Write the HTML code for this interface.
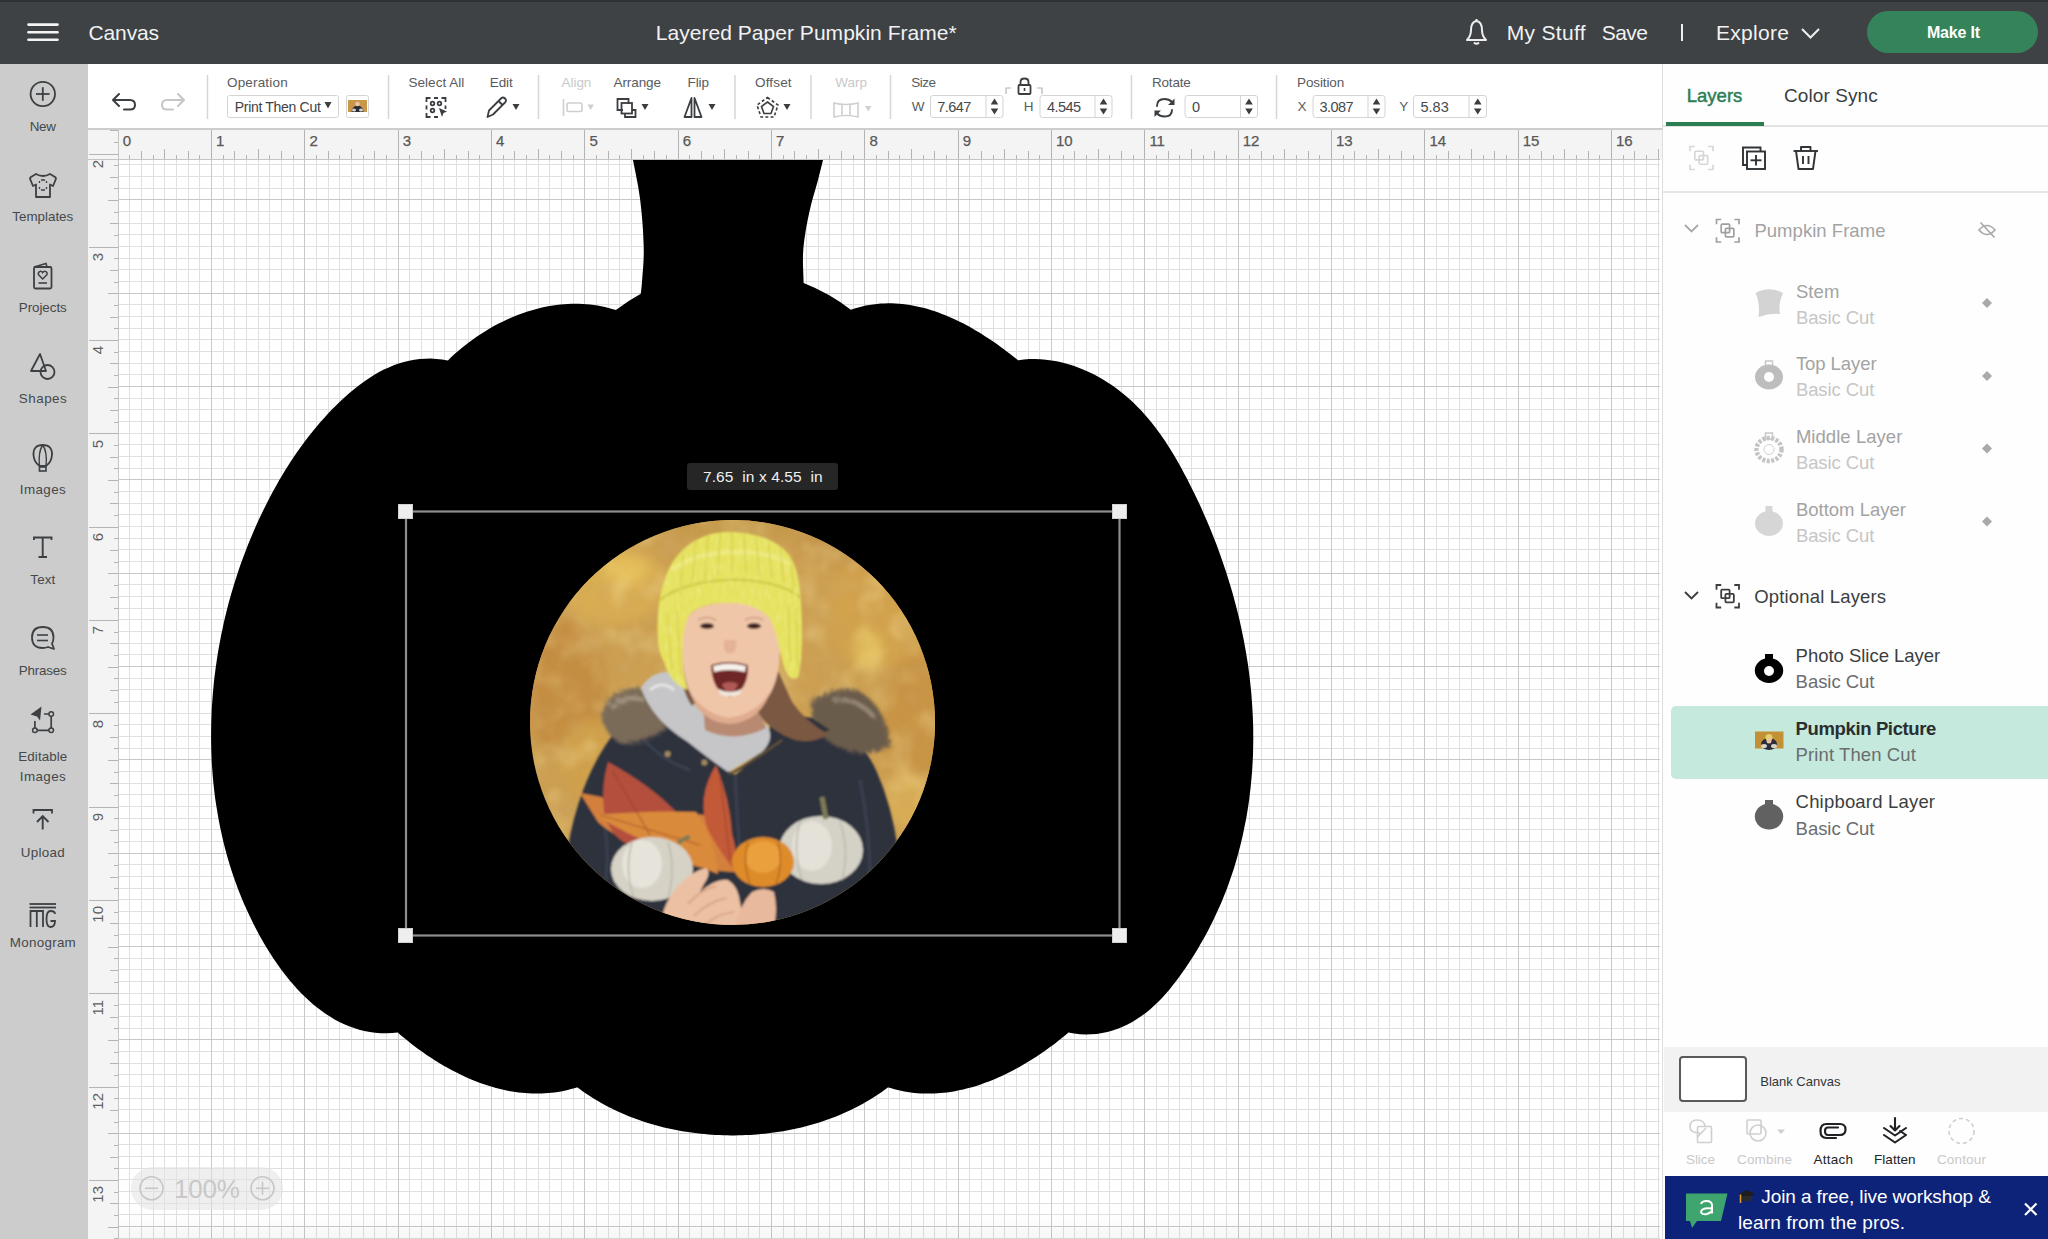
<!DOCTYPE html>
<html><head><meta charset="utf-8">
<style>
*{margin:0;padding:0;box-sizing:border-box}
html,body{width:2048px;height:1239px;overflow:hidden;background:#fff;font-family:"Liberation Sans",sans-serif}
.a{position:absolute}
.t{position:absolute;white-space:nowrap;font-family:"Liberation Sans",sans-serif}
svg{position:absolute;overflow:visible}
</style></head><body>

<svg class="a" style="left:0;top:0" width="2048" height="1239" viewBox="0 0 2048 1239" shape-rendering="crispEdges"><line x1="129.5" y1="160" x2="129.5" y2="1239" stroke="#dfdfdf" stroke-width="1"/><line x1="141.5" y1="160" x2="141.5" y2="1239" stroke="#dfdfdf" stroke-width="1"/><line x1="153.5" y1="160" x2="153.5" y2="1239" stroke="#dfdfdf" stroke-width="1"/><line x1="164.5" y1="160" x2="164.5" y2="1239" stroke="#dfdfdf" stroke-width="1"/><line x1="176.5" y1="160" x2="176.5" y2="1239" stroke="#dfdfdf" stroke-width="1"/><line x1="188.5" y1="160" x2="188.5" y2="1239" stroke="#dfdfdf" stroke-width="1"/><line x1="199.5" y1="160" x2="199.5" y2="1239" stroke="#dfdfdf" stroke-width="1"/><line x1="223.5" y1="160" x2="223.5" y2="1239" stroke="#dfdfdf" stroke-width="1"/><line x1="234.5" y1="160" x2="234.5" y2="1239" stroke="#dfdfdf" stroke-width="1"/><line x1="246.5" y1="160" x2="246.5" y2="1239" stroke="#dfdfdf" stroke-width="1"/><line x1="258.5" y1="160" x2="258.5" y2="1239" stroke="#dfdfdf" stroke-width="1"/><line x1="269.5" y1="160" x2="269.5" y2="1239" stroke="#dfdfdf" stroke-width="1"/><line x1="281.5" y1="160" x2="281.5" y2="1239" stroke="#dfdfdf" stroke-width="1"/><line x1="293.5" y1="160" x2="293.5" y2="1239" stroke="#dfdfdf" stroke-width="1"/><line x1="316.5" y1="160" x2="316.5" y2="1239" stroke="#dfdfdf" stroke-width="1"/><line x1="328.5" y1="160" x2="328.5" y2="1239" stroke="#dfdfdf" stroke-width="1"/><line x1="339.5" y1="160" x2="339.5" y2="1239" stroke="#dfdfdf" stroke-width="1"/><line x1="351.5" y1="160" x2="351.5" y2="1239" stroke="#dfdfdf" stroke-width="1"/><line x1="363.5" y1="160" x2="363.5" y2="1239" stroke="#dfdfdf" stroke-width="1"/><line x1="374.5" y1="160" x2="374.5" y2="1239" stroke="#dfdfdf" stroke-width="1"/><line x1="386.5" y1="160" x2="386.5" y2="1239" stroke="#dfdfdf" stroke-width="1"/><line x1="409.5" y1="160" x2="409.5" y2="1239" stroke="#dfdfdf" stroke-width="1"/><line x1="421.5" y1="160" x2="421.5" y2="1239" stroke="#dfdfdf" stroke-width="1"/><line x1="433.5" y1="160" x2="433.5" y2="1239" stroke="#dfdfdf" stroke-width="1"/><line x1="444.5" y1="160" x2="444.5" y2="1239" stroke="#dfdfdf" stroke-width="1"/><line x1="456.5" y1="160" x2="456.5" y2="1239" stroke="#dfdfdf" stroke-width="1"/><line x1="468.5" y1="160" x2="468.5" y2="1239" stroke="#dfdfdf" stroke-width="1"/><line x1="479.5" y1="160" x2="479.5" y2="1239" stroke="#dfdfdf" stroke-width="1"/><line x1="503.5" y1="160" x2="503.5" y2="1239" stroke="#dfdfdf" stroke-width="1"/><line x1="514.5" y1="160" x2="514.5" y2="1239" stroke="#dfdfdf" stroke-width="1"/><line x1="526.5" y1="160" x2="526.5" y2="1239" stroke="#dfdfdf" stroke-width="1"/><line x1="538.5" y1="160" x2="538.5" y2="1239" stroke="#dfdfdf" stroke-width="1"/><line x1="549.5" y1="160" x2="549.5" y2="1239" stroke="#dfdfdf" stroke-width="1"/><line x1="561.5" y1="160" x2="561.5" y2="1239" stroke="#dfdfdf" stroke-width="1"/><line x1="573.5" y1="160" x2="573.5" y2="1239" stroke="#dfdfdf" stroke-width="1"/><line x1="596.5" y1="160" x2="596.5" y2="1239" stroke="#dfdfdf" stroke-width="1"/><line x1="608.5" y1="160" x2="608.5" y2="1239" stroke="#dfdfdf" stroke-width="1"/><line x1="619.5" y1="160" x2="619.5" y2="1239" stroke="#dfdfdf" stroke-width="1"/><line x1="631.5" y1="160" x2="631.5" y2="1239" stroke="#dfdfdf" stroke-width="1"/><line x1="643.5" y1="160" x2="643.5" y2="1239" stroke="#dfdfdf" stroke-width="1"/><line x1="654.5" y1="160" x2="654.5" y2="1239" stroke="#dfdfdf" stroke-width="1"/><line x1="666.5" y1="160" x2="666.5" y2="1239" stroke="#dfdfdf" stroke-width="1"/><line x1="689.5" y1="160" x2="689.5" y2="1239" stroke="#dfdfdf" stroke-width="1"/><line x1="701.5" y1="160" x2="701.5" y2="1239" stroke="#dfdfdf" stroke-width="1"/><line x1="713.5" y1="160" x2="713.5" y2="1239" stroke="#dfdfdf" stroke-width="1"/><line x1="724.5" y1="160" x2="724.5" y2="1239" stroke="#dfdfdf" stroke-width="1"/><line x1="736.5" y1="160" x2="736.5" y2="1239" stroke="#dfdfdf" stroke-width="1"/><line x1="748.5" y1="160" x2="748.5" y2="1239" stroke="#dfdfdf" stroke-width="1"/><line x1="759.5" y1="160" x2="759.5" y2="1239" stroke="#dfdfdf" stroke-width="1"/><line x1="783.5" y1="160" x2="783.5" y2="1239" stroke="#dfdfdf" stroke-width="1"/><line x1="794.5" y1="160" x2="794.5" y2="1239" stroke="#dfdfdf" stroke-width="1"/><line x1="806.5" y1="160" x2="806.5" y2="1239" stroke="#dfdfdf" stroke-width="1"/><line x1="818.5" y1="160" x2="818.5" y2="1239" stroke="#dfdfdf" stroke-width="1"/><line x1="829.5" y1="160" x2="829.5" y2="1239" stroke="#dfdfdf" stroke-width="1"/><line x1="841.5" y1="160" x2="841.5" y2="1239" stroke="#dfdfdf" stroke-width="1"/><line x1="853.5" y1="160" x2="853.5" y2="1239" stroke="#dfdfdf" stroke-width="1"/><line x1="876.5" y1="160" x2="876.5" y2="1239" stroke="#dfdfdf" stroke-width="1"/><line x1="888.5" y1="160" x2="888.5" y2="1239" stroke="#dfdfdf" stroke-width="1"/><line x1="899.5" y1="160" x2="899.5" y2="1239" stroke="#dfdfdf" stroke-width="1"/><line x1="911.5" y1="160" x2="911.5" y2="1239" stroke="#dfdfdf" stroke-width="1"/><line x1="923.5" y1="160" x2="923.5" y2="1239" stroke="#dfdfdf" stroke-width="1"/><line x1="934.5" y1="160" x2="934.5" y2="1239" stroke="#dfdfdf" stroke-width="1"/><line x1="946.5" y1="160" x2="946.5" y2="1239" stroke="#dfdfdf" stroke-width="1"/><line x1="969.5" y1="160" x2="969.5" y2="1239" stroke="#dfdfdf" stroke-width="1"/><line x1="981.5" y1="160" x2="981.5" y2="1239" stroke="#dfdfdf" stroke-width="1"/><line x1="993.5" y1="160" x2="993.5" y2="1239" stroke="#dfdfdf" stroke-width="1"/><line x1="1004.5" y1="160" x2="1004.5" y2="1239" stroke="#dfdfdf" stroke-width="1"/><line x1="1016.5" y1="160" x2="1016.5" y2="1239" stroke="#dfdfdf" stroke-width="1"/><line x1="1028.5" y1="160" x2="1028.5" y2="1239" stroke="#dfdfdf" stroke-width="1"/><line x1="1039.5" y1="160" x2="1039.5" y2="1239" stroke="#dfdfdf" stroke-width="1"/><line x1="1063.5" y1="160" x2="1063.5" y2="1239" stroke="#dfdfdf" stroke-width="1"/><line x1="1074.5" y1="160" x2="1074.5" y2="1239" stroke="#dfdfdf" stroke-width="1"/><line x1="1086.5" y1="160" x2="1086.5" y2="1239" stroke="#dfdfdf" stroke-width="1"/><line x1="1098.5" y1="160" x2="1098.5" y2="1239" stroke="#dfdfdf" stroke-width="1"/><line x1="1109.5" y1="160" x2="1109.5" y2="1239" stroke="#dfdfdf" stroke-width="1"/><line x1="1121.5" y1="160" x2="1121.5" y2="1239" stroke="#dfdfdf" stroke-width="1"/><line x1="1133.5" y1="160" x2="1133.5" y2="1239" stroke="#dfdfdf" stroke-width="1"/><line x1="1156.5" y1="160" x2="1156.5" y2="1239" stroke="#dfdfdf" stroke-width="1"/><line x1="1168.5" y1="160" x2="1168.5" y2="1239" stroke="#dfdfdf" stroke-width="1"/><line x1="1179.5" y1="160" x2="1179.5" y2="1239" stroke="#dfdfdf" stroke-width="1"/><line x1="1191.5" y1="160" x2="1191.5" y2="1239" stroke="#dfdfdf" stroke-width="1"/><line x1="1203.5" y1="160" x2="1203.5" y2="1239" stroke="#dfdfdf" stroke-width="1"/><line x1="1214.5" y1="160" x2="1214.5" y2="1239" stroke="#dfdfdf" stroke-width="1"/><line x1="1226.5" y1="160" x2="1226.5" y2="1239" stroke="#dfdfdf" stroke-width="1"/><line x1="1249.5" y1="160" x2="1249.5" y2="1239" stroke="#dfdfdf" stroke-width="1"/><line x1="1261.5" y1="160" x2="1261.5" y2="1239" stroke="#dfdfdf" stroke-width="1"/><line x1="1273.5" y1="160" x2="1273.5" y2="1239" stroke="#dfdfdf" stroke-width="1"/><line x1="1284.5" y1="160" x2="1284.5" y2="1239" stroke="#dfdfdf" stroke-width="1"/><line x1="1296.5" y1="160" x2="1296.5" y2="1239" stroke="#dfdfdf" stroke-width="1"/><line x1="1308.5" y1="160" x2="1308.5" y2="1239" stroke="#dfdfdf" stroke-width="1"/><line x1="1319.5" y1="160" x2="1319.5" y2="1239" stroke="#dfdfdf" stroke-width="1"/><line x1="1343.5" y1="160" x2="1343.5" y2="1239" stroke="#dfdfdf" stroke-width="1"/><line x1="1354.5" y1="160" x2="1354.5" y2="1239" stroke="#dfdfdf" stroke-width="1"/><line x1="1366.5" y1="160" x2="1366.5" y2="1239" stroke="#dfdfdf" stroke-width="1"/><line x1="1378.5" y1="160" x2="1378.5" y2="1239" stroke="#dfdfdf" stroke-width="1"/><line x1="1389.5" y1="160" x2="1389.5" y2="1239" stroke="#dfdfdf" stroke-width="1"/><line x1="1401.5" y1="160" x2="1401.5" y2="1239" stroke="#dfdfdf" stroke-width="1"/><line x1="1413.5" y1="160" x2="1413.5" y2="1239" stroke="#dfdfdf" stroke-width="1"/><line x1="1436.5" y1="160" x2="1436.5" y2="1239" stroke="#dfdfdf" stroke-width="1"/><line x1="1448.5" y1="160" x2="1448.5" y2="1239" stroke="#dfdfdf" stroke-width="1"/><line x1="1459.5" y1="160" x2="1459.5" y2="1239" stroke="#dfdfdf" stroke-width="1"/><line x1="1471.5" y1="160" x2="1471.5" y2="1239" stroke="#dfdfdf" stroke-width="1"/><line x1="1483.5" y1="160" x2="1483.5" y2="1239" stroke="#dfdfdf" stroke-width="1"/><line x1="1494.5" y1="160" x2="1494.5" y2="1239" stroke="#dfdfdf" stroke-width="1"/><line x1="1506.5" y1="160" x2="1506.5" y2="1239" stroke="#dfdfdf" stroke-width="1"/><line x1="1529.5" y1="160" x2="1529.5" y2="1239" stroke="#dfdfdf" stroke-width="1"/><line x1="1541.5" y1="160" x2="1541.5" y2="1239" stroke="#dfdfdf" stroke-width="1"/><line x1="1553.5" y1="160" x2="1553.5" y2="1239" stroke="#dfdfdf" stroke-width="1"/><line x1="1564.5" y1="160" x2="1564.5" y2="1239" stroke="#dfdfdf" stroke-width="1"/><line x1="1576.5" y1="160" x2="1576.5" y2="1239" stroke="#dfdfdf" stroke-width="1"/><line x1="1588.5" y1="160" x2="1588.5" y2="1239" stroke="#dfdfdf" stroke-width="1"/><line x1="1599.5" y1="160" x2="1599.5" y2="1239" stroke="#dfdfdf" stroke-width="1"/><line x1="1623.5" y1="160" x2="1623.5" y2="1239" stroke="#dfdfdf" stroke-width="1"/><line x1="1634.5" y1="160" x2="1634.5" y2="1239" stroke="#dfdfdf" stroke-width="1"/><line x1="1646.5" y1="160" x2="1646.5" y2="1239" stroke="#dfdfdf" stroke-width="1"/><line x1="1658.5" y1="160" x2="1658.5" y2="1239" stroke="#dfdfdf" stroke-width="1"/><line x1="118" y1="164.5" x2="1660" y2="164.5" stroke="#dfdfdf" stroke-width="1"/><line x1="118" y1="176.5" x2="1660" y2="176.5" stroke="#dfdfdf" stroke-width="1"/><line x1="118" y1="188.5" x2="1660" y2="188.5" stroke="#dfdfdf" stroke-width="1"/><line x1="118" y1="211.5" x2="1660" y2="211.5" stroke="#dfdfdf" stroke-width="1"/><line x1="118" y1="223.5" x2="1660" y2="223.5" stroke="#dfdfdf" stroke-width="1"/><line x1="118" y1="234.5" x2="1660" y2="234.5" stroke="#dfdfdf" stroke-width="1"/><line x1="118" y1="246.5" x2="1660" y2="246.5" stroke="#dfdfdf" stroke-width="1"/><line x1="118" y1="258.5" x2="1660" y2="258.5" stroke="#dfdfdf" stroke-width="1"/><line x1="118" y1="269.5" x2="1660" y2="269.5" stroke="#dfdfdf" stroke-width="1"/><line x1="118" y1="281.5" x2="1660" y2="281.5" stroke="#dfdfdf" stroke-width="1"/><line x1="118" y1="304.5" x2="1660" y2="304.5" stroke="#dfdfdf" stroke-width="1"/><line x1="118" y1="316.5" x2="1660" y2="316.5" stroke="#dfdfdf" stroke-width="1"/><line x1="118" y1="328.5" x2="1660" y2="328.5" stroke="#dfdfdf" stroke-width="1"/><line x1="118" y1="339.5" x2="1660" y2="339.5" stroke="#dfdfdf" stroke-width="1"/><line x1="118" y1="351.5" x2="1660" y2="351.5" stroke="#dfdfdf" stroke-width="1"/><line x1="118" y1="363.5" x2="1660" y2="363.5" stroke="#dfdfdf" stroke-width="1"/><line x1="118" y1="374.5" x2="1660" y2="374.5" stroke="#dfdfdf" stroke-width="1"/><line x1="118" y1="398.5" x2="1660" y2="398.5" stroke="#dfdfdf" stroke-width="1"/><line x1="118" y1="409.5" x2="1660" y2="409.5" stroke="#dfdfdf" stroke-width="1"/><line x1="118" y1="421.5" x2="1660" y2="421.5" stroke="#dfdfdf" stroke-width="1"/><line x1="118" y1="433.5" x2="1660" y2="433.5" stroke="#dfdfdf" stroke-width="1"/><line x1="118" y1="444.5" x2="1660" y2="444.5" stroke="#dfdfdf" stroke-width="1"/><line x1="118" y1="456.5" x2="1660" y2="456.5" stroke="#dfdfdf" stroke-width="1"/><line x1="118" y1="468.5" x2="1660" y2="468.5" stroke="#dfdfdf" stroke-width="1"/><line x1="118" y1="491.5" x2="1660" y2="491.5" stroke="#dfdfdf" stroke-width="1"/><line x1="118" y1="503.5" x2="1660" y2="503.5" stroke="#dfdfdf" stroke-width="1"/><line x1="118" y1="514.5" x2="1660" y2="514.5" stroke="#dfdfdf" stroke-width="1"/><line x1="118" y1="526.5" x2="1660" y2="526.5" stroke="#dfdfdf" stroke-width="1"/><line x1="118" y1="538.5" x2="1660" y2="538.5" stroke="#dfdfdf" stroke-width="1"/><line x1="118" y1="549.5" x2="1660" y2="549.5" stroke="#dfdfdf" stroke-width="1"/><line x1="118" y1="561.5" x2="1660" y2="561.5" stroke="#dfdfdf" stroke-width="1"/><line x1="118" y1="584.5" x2="1660" y2="584.5" stroke="#dfdfdf" stroke-width="1"/><line x1="118" y1="596.5" x2="1660" y2="596.5" stroke="#dfdfdf" stroke-width="1"/><line x1="118" y1="608.5" x2="1660" y2="608.5" stroke="#dfdfdf" stroke-width="1"/><line x1="118" y1="619.5" x2="1660" y2="619.5" stroke="#dfdfdf" stroke-width="1"/><line x1="118" y1="631.5" x2="1660" y2="631.5" stroke="#dfdfdf" stroke-width="1"/><line x1="118" y1="643.5" x2="1660" y2="643.5" stroke="#dfdfdf" stroke-width="1"/><line x1="118" y1="654.5" x2="1660" y2="654.5" stroke="#dfdfdf" stroke-width="1"/><line x1="118" y1="678.5" x2="1660" y2="678.5" stroke="#dfdfdf" stroke-width="1"/><line x1="118" y1="689.5" x2="1660" y2="689.5" stroke="#dfdfdf" stroke-width="1"/><line x1="118" y1="701.5" x2="1660" y2="701.5" stroke="#dfdfdf" stroke-width="1"/><line x1="118" y1="713.5" x2="1660" y2="713.5" stroke="#dfdfdf" stroke-width="1"/><line x1="118" y1="724.5" x2="1660" y2="724.5" stroke="#dfdfdf" stroke-width="1"/><line x1="118" y1="736.5" x2="1660" y2="736.5" stroke="#dfdfdf" stroke-width="1"/><line x1="118" y1="748.5" x2="1660" y2="748.5" stroke="#dfdfdf" stroke-width="1"/><line x1="118" y1="771.5" x2="1660" y2="771.5" stroke="#dfdfdf" stroke-width="1"/><line x1="118" y1="783.5" x2="1660" y2="783.5" stroke="#dfdfdf" stroke-width="1"/><line x1="118" y1="794.5" x2="1660" y2="794.5" stroke="#dfdfdf" stroke-width="1"/><line x1="118" y1="806.5" x2="1660" y2="806.5" stroke="#dfdfdf" stroke-width="1"/><line x1="118" y1="818.5" x2="1660" y2="818.5" stroke="#dfdfdf" stroke-width="1"/><line x1="118" y1="829.5" x2="1660" y2="829.5" stroke="#dfdfdf" stroke-width="1"/><line x1="118" y1="841.5" x2="1660" y2="841.5" stroke="#dfdfdf" stroke-width="1"/><line x1="118" y1="864.5" x2="1660" y2="864.5" stroke="#dfdfdf" stroke-width="1"/><line x1="118" y1="876.5" x2="1660" y2="876.5" stroke="#dfdfdf" stroke-width="1"/><line x1="118" y1="888.5" x2="1660" y2="888.5" stroke="#dfdfdf" stroke-width="1"/><line x1="118" y1="899.5" x2="1660" y2="899.5" stroke="#dfdfdf" stroke-width="1"/><line x1="118" y1="911.5" x2="1660" y2="911.5" stroke="#dfdfdf" stroke-width="1"/><line x1="118" y1="923.5" x2="1660" y2="923.5" stroke="#dfdfdf" stroke-width="1"/><line x1="118" y1="934.5" x2="1660" y2="934.5" stroke="#dfdfdf" stroke-width="1"/><line x1="118" y1="958.5" x2="1660" y2="958.5" stroke="#dfdfdf" stroke-width="1"/><line x1="118" y1="969.5" x2="1660" y2="969.5" stroke="#dfdfdf" stroke-width="1"/><line x1="118" y1="981.5" x2="1660" y2="981.5" stroke="#dfdfdf" stroke-width="1"/><line x1="118" y1="993.5" x2="1660" y2="993.5" stroke="#dfdfdf" stroke-width="1"/><line x1="118" y1="1004.5" x2="1660" y2="1004.5" stroke="#dfdfdf" stroke-width="1"/><line x1="118" y1="1016.5" x2="1660" y2="1016.5" stroke="#dfdfdf" stroke-width="1"/><line x1="118" y1="1028.5" x2="1660" y2="1028.5" stroke="#dfdfdf" stroke-width="1"/><line x1="118" y1="1051.5" x2="1660" y2="1051.5" stroke="#dfdfdf" stroke-width="1"/><line x1="118" y1="1063.5" x2="1660" y2="1063.5" stroke="#dfdfdf" stroke-width="1"/><line x1="118" y1="1074.5" x2="1660" y2="1074.5" stroke="#dfdfdf" stroke-width="1"/><line x1="118" y1="1086.5" x2="1660" y2="1086.5" stroke="#dfdfdf" stroke-width="1"/><line x1="118" y1="1098.5" x2="1660" y2="1098.5" stroke="#dfdfdf" stroke-width="1"/><line x1="118" y1="1109.5" x2="1660" y2="1109.5" stroke="#dfdfdf" stroke-width="1"/><line x1="118" y1="1121.5" x2="1660" y2="1121.5" stroke="#dfdfdf" stroke-width="1"/><line x1="118" y1="1144.5" x2="1660" y2="1144.5" stroke="#dfdfdf" stroke-width="1"/><line x1="118" y1="1156.5" x2="1660" y2="1156.5" stroke="#dfdfdf" stroke-width="1"/><line x1="118" y1="1168.5" x2="1660" y2="1168.5" stroke="#dfdfdf" stroke-width="1"/><line x1="118" y1="1179.5" x2="1660" y2="1179.5" stroke="#dfdfdf" stroke-width="1"/><line x1="118" y1="1191.5" x2="1660" y2="1191.5" stroke="#dfdfdf" stroke-width="1"/><line x1="118" y1="1203.5" x2="1660" y2="1203.5" stroke="#dfdfdf" stroke-width="1"/><line x1="118" y1="1214.5" x2="1660" y2="1214.5" stroke="#dfdfdf" stroke-width="1"/><line x1="118" y1="1238.5" x2="1660" y2="1238.5" stroke="#dfdfdf" stroke-width="1"/><line x1="118.5" y1="160" x2="118.5" y2="1239" stroke="#c8c8c8" stroke-width="1"/><line x1="211.5" y1="160" x2="211.5" y2="1239" stroke="#c8c8c8" stroke-width="1"/><line x1="304.5" y1="160" x2="304.5" y2="1239" stroke="#c8c8c8" stroke-width="1"/><line x1="398.5" y1="160" x2="398.5" y2="1239" stroke="#c8c8c8" stroke-width="1"/><line x1="491.5" y1="160" x2="491.5" y2="1239" stroke="#c8c8c8" stroke-width="1"/><line x1="584.5" y1="160" x2="584.5" y2="1239" stroke="#c8c8c8" stroke-width="1"/><line x1="678.5" y1="160" x2="678.5" y2="1239" stroke="#c8c8c8" stroke-width="1"/><line x1="771.5" y1="160" x2="771.5" y2="1239" stroke="#c8c8c8" stroke-width="1"/><line x1="864.5" y1="160" x2="864.5" y2="1239" stroke="#c8c8c8" stroke-width="1"/><line x1="958.5" y1="160" x2="958.5" y2="1239" stroke="#c8c8c8" stroke-width="1"/><line x1="1051.5" y1="160" x2="1051.5" y2="1239" stroke="#c8c8c8" stroke-width="1"/><line x1="1144.5" y1="160" x2="1144.5" y2="1239" stroke="#c8c8c8" stroke-width="1"/><line x1="1238.5" y1="160" x2="1238.5" y2="1239" stroke="#c8c8c8" stroke-width="1"/><line x1="1331.5" y1="160" x2="1331.5" y2="1239" stroke="#c8c8c8" stroke-width="1"/><line x1="1424.5" y1="160" x2="1424.5" y2="1239" stroke="#c8c8c8" stroke-width="1"/><line x1="1518.5" y1="160" x2="1518.5" y2="1239" stroke="#c8c8c8" stroke-width="1"/><line x1="1611.5" y1="160" x2="1611.5" y2="1239" stroke="#c8c8c8" stroke-width="1"/><line x1="118" y1="199.5" x2="1660" y2="199.5" stroke="#c8c8c8" stroke-width="1"/><line x1="118" y1="293.5" x2="1660" y2="293.5" stroke="#c8c8c8" stroke-width="1"/><line x1="118" y1="386.5" x2="1660" y2="386.5" stroke="#c8c8c8" stroke-width="1"/><line x1="118" y1="479.5" x2="1660" y2="479.5" stroke="#c8c8c8" stroke-width="1"/><line x1="118" y1="573.5" x2="1660" y2="573.5" stroke="#c8c8c8" stroke-width="1"/><line x1="118" y1="666.5" x2="1660" y2="666.5" stroke="#c8c8c8" stroke-width="1"/><line x1="118" y1="759.5" x2="1660" y2="759.5" stroke="#c8c8c8" stroke-width="1"/><line x1="118" y1="853.5" x2="1660" y2="853.5" stroke="#c8c8c8" stroke-width="1"/><line x1="118" y1="946.5" x2="1660" y2="946.5" stroke="#c8c8c8" stroke-width="1"/><line x1="118" y1="1039.5" x2="1660" y2="1039.5" stroke="#c8c8c8" stroke-width="1"/><line x1="118" y1="1133.5" x2="1660" y2="1133.5" stroke="#c8c8c8" stroke-width="1"/><line x1="118" y1="1226.5" x2="1660" y2="1226.5" stroke="#c8c8c8" stroke-width="1"/></svg>
<svg class="a" style="left:0;top:0" width="2048" height="1239" viewBox="0 0 2048 1239"><path d="M631 150 L825.5 150 C823.0 160.0 820.4 170.8 818.0 180.0 C815.6 189.2 813.1 196.3 811.0 205.0 C808.9 213.7 806.8 223.7 805.5 232.0 C804.2 240.3 803.3 246.5 803.0 255.0 C802.7 263.5 803.4 273.7 803.6 283.0 A192.2 192.2 0 0 1 850.8 309.7 L850.8 309.7 L854.5 308.5 L858.3 307.4 L862.0 306.5 L865.7 305.6 L869.4 304.9 L873.1 304.4 L876.9 303.9 L880.6 303.6 L884.3 303.4 L888.0 303.3 L891.6 303.3 L895.3 303.5 L899.0 303.7 L902.6 304.0 L906.3 304.5 L909.9 305.0 L913.5 305.7 L917.1 306.4 L920.7 307.2 L924.3 308.1 L927.8 309.1 L931.4 310.2 L934.9 311.3 L938.4 312.5 L941.9 313.9 L945.4 315.2 L948.8 316.7 L952.3 318.2 L955.7 319.8 L959.1 321.4 L962.5 323.1 L965.8 324.8 L969.1 326.6 L972.4 328.5 L975.7 330.4 L978.9 332.3 L982.1 334.3 L985.3 336.4 L988.5 338.4 L991.6 340.5 L994.7 342.6 L997.8 344.8 L1000.8 347.0 L1003.9 349.2 L1006.8 351.4 L1009.8 353.7 L1012.7 355.9 L1015.6 358.2 L1018.4 360.5 L1018.4 360.2 L1023.9 359.5 L1029.4 359.1 L1034.9 359.0 L1040.4 359.2 L1045.9 359.7 L1051.3 360.4 L1056.8 361.3 L1062.1 362.5 L1067.5 363.9 L1072.8 365.5 L1078.0 367.4 L1083.1 369.4 L1088.2 371.7 L1093.2 374.1 L1098.2 376.8 L1103.0 379.5 L1107.7 382.5 L1112.4 385.6 L1116.9 388.8 L1121.3 392.2 L1125.6 395.7 L1129.7 399.3 L1133.8 403.1 L1137.6 406.9 L1141.4 410.8 L1145.1 414.9 L1148.6 419.0 L1152.1 423.2 L1155.4 427.5 L1158.7 431.9 L1161.8 436.3 L1164.9 440.8 L1167.9 445.4 L1170.8 450.0 L1173.7 454.7 L1176.5 459.5 L1179.2 464.2 L1181.8 469.1 L1184.4 473.9 L1187.0 478.8 L1189.5 483.7 L1192.0 488.7 L1194.4 493.6 L1196.8 498.6 L1199.2 503.6 L1201.5 508.6 L1203.7 513.7 L1206.0 518.7 L1208.1 523.8 L1210.3 528.9 L1212.3 534.0 L1214.4 539.2 L1216.4 544.3 L1218.3 549.5 L1220.2 554.7 L1222.0 559.9 L1223.8 565.2 L1225.6 570.4 L1227.3 575.7 L1228.9 580.9 L1230.5 586.2 L1232.1 591.5 L1233.6 596.9 L1235.0 602.2 L1236.4 607.5 L1237.8 612.9 L1239.1 618.3 L1240.3 623.6 L1241.5 629.0 L1242.6 634.4 L1243.7 639.8 L1244.7 645.3 L1245.7 650.7 L1246.6 656.1 L1247.5 661.6 L1248.3 667.0 L1249.0 672.5 L1249.7 678.0 L1250.3 683.4 L1250.9 688.9 L1251.4 694.4 L1251.8 699.9 L1252.2 705.4 L1252.5 710.9 L1252.8 716.4 L1253.0 721.9 L1253.2 727.4 L1253.2 732.9 L1253.3 738.4 L1253.2 743.9 L1253.1 749.4 L1253.0 754.9 L1252.7 760.4 L1252.4 765.9 L1252.1 771.4 L1251.6 776.9 L1251.1 782.3 L1250.6 787.8 L1249.9 793.3 L1249.3 798.7 L1248.5 804.2 L1247.7 809.6 L1246.8 815.0 L1245.8 820.4 L1244.7 825.8 L1243.6 831.2 L1242.5 836.6 L1241.2 841.9 L1239.9 847.3 L1238.5 852.6 L1237.0 857.9 L1235.5 863.1 L1233.9 868.4 L1232.2 873.6 L1230.4 878.8 L1228.6 884.0 L1226.7 889.2 L1224.7 894.3 L1222.6 899.4 L1220.5 904.5 L1218.2 909.6 L1215.9 914.6 L1213.6 919.6 L1211.1 924.6 L1208.6 929.5 L1206.0 934.4 L1203.3 939.3 L1200.5 944.1 L1197.7 948.9 L1194.8 953.7 L1191.8 958.4 L1188.8 963.1 L1185.7 967.7 L1182.5 972.3 L1179.3 976.8 L1176.0 981.3 L1172.6 985.6 L1169.1 989.9 L1165.5 994.1 L1161.8 998.2 L1158.0 1002.1 L1154.0 1005.8 L1150.0 1009.4 L1145.7 1012.9 L1141.4 1016.1 L1136.9 1019.1 L1132.3 1021.9 L1127.5 1024.5 L1122.7 1026.7 L1117.7 1028.8 L1112.6 1030.5 L1107.4 1032.0 L1102.1 1033.1 L1096.7 1033.9 L1091.2 1034.3 L1085.6 1034.4 L1080.0 1034.2 L1074.2 1033.5 L1068.4 1032.4 L1068.4 1032.6 L1065.9 1034.7 L1063.4 1036.7 L1060.9 1038.8 L1058.3 1040.8 L1055.7 1042.9 L1053.1 1044.9 L1050.4 1046.8 L1047.7 1048.8 L1045.0 1050.7 L1042.2 1052.7 L1039.5 1054.5 L1036.7 1056.4 L1033.8 1058.2 L1031.0 1060.1 L1028.1 1061.8 L1025.2 1063.6 L1022.3 1065.3 L1019.4 1067.0 L1016.4 1068.6 L1013.4 1070.2 L1010.4 1071.8 L1007.4 1073.3 L1004.3 1074.8 L1001.3 1076.2 L998.2 1077.6 L995.1 1078.9 L992.0 1080.2 L988.9 1081.5 L985.7 1082.6 L982.6 1083.8 L979.4 1084.9 L976.2 1085.9 L973.0 1086.9 L969.8 1087.8 L966.6 1088.6 L963.4 1089.4 L960.1 1090.1 L956.9 1090.8 L953.6 1091.4 L950.4 1091.9 L947.1 1092.4 L943.8 1092.8 L940.6 1093.1 L937.3 1093.3 L934.0 1093.5 L930.7 1093.6 L927.4 1093.6 L924.1 1093.5 L920.8 1093.4 L917.5 1093.2 L914.2 1092.9 L910.9 1092.5 L907.6 1092.0 L904.3 1091.4 L901.0 1090.8 L897.7 1090.0 L894.5 1089.2 L891.2 1088.2 L887.9 1087.2 L888.1 1087.3 L885.1 1089.5 L882.1 1091.7 L879.1 1093.8 L876.0 1095.8 L872.9 1097.8 L869.7 1099.7 L866.6 1101.6 L863.3 1103.5 L860.1 1105.2 L856.8 1106.9 L853.6 1108.6 L850.2 1110.2 L846.9 1111.8 L843.5 1113.3 L840.1 1114.8 L836.7 1116.2 L833.3 1117.5 L829.8 1118.8 L826.3 1120.1 L822.8 1121.3 L819.3 1122.4 L815.7 1123.5 L812.2 1124.6 L808.6 1125.6 L805.0 1126.5 L801.4 1127.4 L797.8 1128.3 L794.1 1129.1 L790.5 1129.8 L786.8 1130.5 L783.1 1131.2 L779.4 1131.8 L775.7 1132.3 L772.0 1132.8 L768.3 1133.3 L764.6 1133.7 L760.8 1134.1 L757.1 1134.4 L753.4 1134.7 L749.6 1134.9 L745.8 1135.1 L742.1 1135.2 L738.3 1135.3 L734.6 1135.4 L730.8 1135.4 L727.1 1135.3 L723.3 1135.2 L719.6 1135.1 L715.8 1134.9 L712.0 1134.7 L708.3 1134.4 L704.6 1134.1 L700.8 1133.7 L697.1 1133.3 L693.4 1132.8 L689.7 1132.3 L686.0 1131.8 L682.3 1131.2 L678.6 1130.5 L674.9 1129.8 L671.3 1129.1 L667.6 1128.3 L664.0 1127.4 L660.4 1126.5 L656.8 1125.6 L653.2 1124.6 L649.7 1123.5 L646.1 1122.4 L642.6 1121.3 L639.1 1120.1 L635.6 1118.8 L632.1 1117.5 L628.7 1116.2 L625.3 1114.8 L621.9 1113.3 L618.5 1111.8 L615.2 1110.2 L611.8 1108.6 L608.6 1106.9 L605.3 1105.2 L602.1 1103.5 L598.8 1101.6 L595.7 1099.7 L592.5 1097.8 L589.4 1095.8 L586.3 1093.8 L583.3 1091.7 L580.3 1089.5 L577.3 1087.3 L577.5 1087.2 L574.3 1088.2 L571.0 1089.1 L567.7 1090.0 L564.5 1090.7 L561.2 1091.4 L557.9 1091.9 L554.6 1092.4 L551.4 1092.8 L548.1 1093.1 L544.8 1093.3 L541.5 1093.5 L538.2 1093.6 L535.0 1093.6 L531.7 1093.5 L528.4 1093.3 L525.1 1093.1 L521.9 1092.8 L518.6 1092.4 L515.3 1092.0 L512.1 1091.4 L508.8 1090.9 L505.6 1090.2 L502.4 1089.5 L499.2 1088.7 L496.0 1087.9 L492.8 1087.0 L489.6 1086.1 L486.4 1085.0 L483.2 1084.0 L480.1 1082.9 L477.0 1081.7 L473.8 1080.5 L470.7 1079.2 L467.7 1077.9 L464.6 1076.5 L461.5 1075.1 L458.5 1073.6 L455.5 1072.1 L452.5 1070.6 L449.6 1069.0 L446.6 1067.3 L443.7 1065.7 L440.8 1064.0 L437.9 1062.2 L435.0 1060.4 L432.2 1058.6 L429.4 1056.8 L426.6 1054.9 L423.9 1053.0 L421.2 1051.1 L418.5 1049.2 L415.8 1047.2 L413.2 1045.2 L410.6 1043.2 L408.0 1041.1 L405.5 1039.1 L403.0 1037.0 L400.5 1034.9 L398.1 1032.8 L397.9 1032.4 L392.1 1033.0 L386.3 1033.3 L380.7 1033.2 L375.2 1032.8 L369.8 1032.0 L364.4 1031.0 L359.2 1029.7 L354.1 1028.1 L349.1 1026.3 L344.2 1024.2 L339.3 1021.9 L334.6 1019.4 L330.0 1016.6 L325.5 1013.7 L321.1 1010.6 L316.8 1007.3 L312.7 1003.9 L308.6 1000.3 L304.6 996.6 L300.7 992.7 L296.9 988.7 L293.3 984.6 L289.7 980.4 L286.2 976.1 L282.8 971.7 L279.5 967.2 L276.2 962.6 L273.1 957.9 L270.1 953.2 L267.1 948.5 L264.2 943.7 L261.4 938.8 L258.7 933.9 L256.1 929.0 L253.5 924.1 L251.1 919.1 L248.7 914.1 L246.4 909.1 L244.1 904.0 L242.0 898.9 L239.9 893.8 L237.9 888.7 L236.0 883.5 L234.2 878.4 L232.4 873.2 L230.7 867.9 L229.1 862.7 L227.5 857.4 L226.1 852.2 L224.7 846.9 L223.3 841.5 L222.1 836.2 L220.9 830.8 L219.8 825.5 L218.7 820.1 L217.8 814.7 L216.9 809.3 L216.0 803.9 L215.2 798.4 L214.5 793.0 L213.9 787.6 L213.3 782.1 L212.8 776.6 L212.4 771.2 L212.0 765.7 L211.7 760.2 L211.5 754.7 L211.3 749.2 L211.2 743.7 L211.1 738.2 L211.1 732.7 L211.2 727.2 L211.3 721.7 L211.5 716.2 L211.7 710.7 L212.0 705.2 L212.4 699.7 L212.8 694.2 L213.3 688.8 L213.8 683.3 L214.4 677.8 L215.1 672.3 L215.8 666.9 L216.6 661.4 L217.4 656.0 L218.3 650.5 L219.3 645.1 L220.3 639.7 L221.3 634.3 L222.5 628.9 L223.6 623.5 L224.9 618.1 L226.2 612.8 L227.5 607.4 L228.9 602.1 L230.4 596.8 L231.9 591.5 L233.5 586.2 L235.1 580.9 L236.8 575.7 L238.5 570.5 L240.3 565.3 L242.2 560.1 L244.1 554.9 L246.1 549.7 L248.1 544.6 L250.2 539.5 L252.3 534.4 L254.5 529.3 L256.7 524.3 L259.0 519.3 L261.4 514.3 L263.8 509.3 L266.2 504.4 L268.7 499.5 L271.3 494.6 L273.9 489.7 L276.6 484.9 L279.3 480.1 L282.1 475.4 L285.0 470.6 L287.9 466.0 L290.9 461.3 L293.9 456.7 L297.0 452.2 L300.2 447.7 L303.5 443.2 L306.8 438.8 L310.2 434.5 L313.6 430.2 L317.1 426.0 L320.7 421.8 L324.4 417.7 L328.1 413.6 L331.9 409.6 L335.8 405.7 L339.8 401.8 L343.9 398.0 L348.0 394.3 L352.2 390.7 L356.5 387.2 L360.8 383.9 L365.3 380.7 L369.8 377.7 L374.4 374.8 L379.1 372.1 L383.9 369.6 L388.8 367.4 L393.7 365.3 L398.7 363.5 L403.9 362.0 L409.1 360.7 L414.3 359.7 L419.7 359.0 L425.2 358.7 L430.7 358.6 L436.4 358.9 L442.1 359.5 L447.9 360.5 L448.2 360.2 L450.8 357.6 L453.5 355.1 L456.3 352.6 L459.1 350.2 L462.0 347.8 L464.9 345.5 L467.8 343.2 L470.8 340.9 L473.9 338.7 L477.0 336.6 L480.1 334.5 L483.3 332.4 L486.5 330.4 L489.7 328.5 L493.0 326.6 L496.3 324.8 L499.7 323.1 L503.1 321.4 L506.5 319.8 L509.9 318.2 L513.4 316.7 L516.9 315.3 L520.4 314.0 L524.0 312.7 L527.5 311.6 L531.1 310.5 L534.7 309.4 L538.3 308.5 L542.0 307.6 L545.6 306.8 L549.3 306.1 L553.0 305.5 L556.7 305.0 L560.4 304.6 L564.1 304.2 L567.8 304.0 L571.5 303.8 L575.2 303.8 L578.9 303.8 L582.7 304.0 L586.4 304.2 L590.1 304.5 L593.8 305.0 L597.5 305.6 L601.2 306.2 L604.9 307.0 L608.6 307.9 L612.2 308.9 L615.9 310.0 A192.2 192.2 0 0 1 640.8 293.7 C641.3 288.8 641.7 286.8 642.2 279.0 C642.7 271.2 644.2 260.4 643.8 247.0 C643.4 233.6 642.1 214.6 640.0 198.4 C637.9 182.2 634.0 166.1 631.0 150.0 Z" fill="#000"/></svg>
<svg class="a" style="left:0;top:0" width="2048" height="1239" viewBox="0 0 2048 1239"><defs><clipPath id="pc"><circle cx="732.5" cy="722.5" r="202.5"/></clipPath><filter id="bl" x="-20%" y="-20%" width="140%" height="140%"><feGaussianBlur stdDeviation="6"/></filter><filter id="bl2"><feGaussianBlur stdDeviation="1.2"/></filter><filter id="tex" x="0" y="0" width="100%" height="100%"><feTurbulence type="fractalNoise" baseFrequency="0.035" numOctaves="3" seed="7"/><feColorMatrix type="matrix" values="0 0 0 0 0.93  0 0 0 0 0.78  0 0 0 0 0.35  0 0 0 1.6 -0.75"/><feGaussianBlur stdDeviation="2"/></filter><filter id="tex2" x="0" y="0" width="100%" height="100%"><feTurbulence type="fractalNoise" baseFrequency="0.05" numOctaves="2" seed="3"/><feColorMatrix type="matrix" values="0 0 0 0 0.62  0 0 0 0 0.42  0 0 0 0 0.18  0 0 0 1.6 -0.8"/><feGaussianBlur stdDeviation="2.5"/></filter><filter id="fuzz" x="-20%" y="-20%" width="140%" height="140%"><feTurbulence type="turbulence" baseFrequency="0.25" numOctaves="2" seed="5" result="n"/><feDisplacementMap in="SourceGraphic" in2="n" scale="9"/><feGaussianBlur stdDeviation="0.8"/></filter><filter id="knit" x="0" y="0" width="100%" height="100%"><feTurbulence type="fractalNoise" baseFrequency="0.35 0.08" numOctaves="2" seed="11"/><feColorMatrix type="matrix" values="0 0 0 0 0.98  0 0 0 0 0.97  0 0 0 0 0.6  0 0 0 1.8 -0.9"/></filter></defs><g clip-path="url(#pc)"><rect x="520" y="510" width="430" height="430" fill="#cc9f52"/>
<g filter="url(#bl)">
<ellipse cx="612" cy="585" rx="55" ry="40" fill="#d8ac52"/>
<ellipse cx="625" cy="570" rx="24" ry="14" fill="#e6c05a"/>
<ellipse cx="565" cy="690" rx="40" ry="70" fill="#c48e42"/>
<ellipse cx="590" cy="760" rx="30" ry="40" fill="#d0a04c"/>
<ellipse cx="880" cy="610" rx="55" ry="60" fill="#d2a24e"/>
<ellipse cx="915" cy="730" rx="35" ry="75" fill="#c89444"/>
<ellipse cx="868" cy="650" rx="14" ry="20" fill="#e2bc58"/>
<ellipse cx="850" cy="545" rx="55" ry="22" fill="#c49448"/>
<ellipse cx="735" cy="528" rx="70" ry="14" fill="#c59a4c"/>
<ellipse cx="905" cy="800" rx="25" ry="30" fill="#d8ac56"/>
</g>
<rect x="520" y="510" width="430" height="430" filter="url(#tex)" opacity="0.55"/>
<rect x="520" y="510" width="430" height="430" filter="url(#tex2)" opacity="0.45"/>
<g filter="url(#bl2)">
<!-- jacket body -->
<path d="M560 940 L566 860 Q570 830 578 805 Q592 760 618 728 Q640 712 660 714 L700 750 L735 775 L782 738 Q800 725 830 728 Q860 735 876 770 Q892 805 898 850 L905 940 Z" fill="#2f333e"/>
<path d="M640 735 Q660 760 690 770 M600 800 Q610 840 606 880 M860 780 Q870 830 870 880 M735 776 L740 860" fill="none" stroke="#394050" stroke-width="3"/>
<!-- fur hood -->
<g filter="url(#fuzz)"><path d="M598 712 Q604 690 628 686 Q652 684 664 700 L670 720 Q650 738 626 742 Q604 740 598 712 Z" fill="#7a6a58"/>
<path d="M608 705 Q620 694 640 696" stroke="#a89a86" stroke-width="4" fill="none"/>
<path d="M808 700 Q830 682 856 688 Q884 705 888 742 Q872 754 850 750 Q824 742 812 725 Z" fill="#6b5c4c"/>
<path d="M830 698 Q855 695 872 715" stroke="#9a8c78" stroke-width="4" fill="none"/></g>
<path d="M728 776 L764 750 L770 726 Q790 712 812 718 L830 730 L790 745 Z" fill="#2f333e"/>
<!-- hoodie gray -->
<path d="M641 688 Q650 672 668 672 Q686 688 696 706 Q712 726 735 735 Q752 733 766 724 Q776 738 762 752 L728 772 Q705 756 688 742 Q652 720 641 688 Z" fill="#c6c6c8"/>
<path d="M650 690 Q662 680 674 690" fill="none" stroke="#e4e4e4" stroke-width="3"/>
<!-- neck / shadow -->
<path d="M703 705 L757 705 L766 728 Q735 744 705 730 Z" fill="#b88a72"/>
<!-- zipper -->
<path d="M729 774 Q755 760 782 740" fill="none" stroke="#6a5530" stroke-width="2"/>
<circle cx="667.7" cy="754" r="3" fill="#a08860"/><circle cx="704.4" cy="762.5" r="3" fill="#a08860"/>
<!-- hair -->
<path d="M768 648 Q782 680 792 702 Q806 722 828 734 Q815 744 795 740 Q768 730 758 712 Z" fill="#7a5842"/>
<path d="M682 662 Q680 690 692 706 L698 700 Q688 680 690 664 Z" fill="#7a5842"/>
<!-- face -->
<path d="M682 640 C682 612 700 603 730 603 C762 603 779 614 780 642 C781 680 770 700 756 710 C746 716 738 718 729 718 C716 718 704 712 696 702 C686 690 682 670 682 640 Z" fill="#f0c6a8"/>
<path d="M690 692 Q704 714 729 718 Q756 714 770 692 Q760 722 729 724 Q700 722 690 692 Z" fill="#e0ac8e"/>
<!-- eyes -->
<ellipse cx="707" cy="626" rx="7" ry="3" fill="#3e2822"/>
<ellipse cx="754" cy="626" rx="7" ry="3" fill="#3e2822"/>
<path d="M698 620 Q707 615 716 620 M745 620 Q754 615 763 620" fill="none" stroke="#c89a80" stroke-width="1.5"/>
<path d="M724 640 Q722 652 730 654 Q738 652 736 640" fill="#e4b296"/>
<!-- mouth -->
<path d="M711 665 Q729 659 748 665 Q749 690 730 697 Q712 692 711 665 Z" fill="#6e2826"/>
<path d="M713 666 Q729 661 746 666 L745 672 Q729 668 714 672 Z" fill="#f6f1ea"/>
<path d="M718 689 Q730 695 742 689 L740 694 Q730 699 720 694 Z" fill="#f0e8e0"/>
<path d="M722 684 Q730 680 738 684 Q736 691 730 692 Q724 691 722 684 Z" fill="#b05a56"/>
<!-- beanie -->
<path d="M658 640 C656 610 660 585 672 563 C688 540 708 532 728 532 C755 532 778 540 790 556 C800 572 802 600 802 636 C802 656 800 670 798 677 C792 682 786 676 782 660 C778 640 774 624 768 616 C756 606 744 603 730 603 C712 603 698 606 690 614 C682 626 682 648 683 666 C684 676 686 684 688 690 C676 686 668 676 664 662 C660 654 658 648 658 640 Z" fill="#e6e260"/>
<path d="M672 570 C700 548 760 546 792 565" fill="none" stroke="#f2ee90" stroke-width="5" opacity="0.6"/>
<path d="M660 600 C690 575 770 572 801 598" fill="none" stroke="#d2ca46" stroke-width="2.5"/>
<path d="M684 548 L680 595 M696 540 L692 585 M708 535 L705 580 M720 533 L718 575 M732 532 L732 573 M744 533 L746 573 M756 536 L759 575 M768 540 L772 578 M780 547 L784 583 M790 556 L794 590 M667 612 L672 670 M677 610 L681 676 M788 606 L790 662 M796 608 L798 668" fill="none" stroke="#d4cc48" stroke-width="1.6" opacity="0.75"/>
<clipPath id="bc"><path d="M658 640 C656 610 660 585 672 563 C688 540 708 532 728 532 C755 532 778 540 790 556 C800 572 802 600 802 636 C802 656 800 670 798 677 C792 682 786 676 782 660 C778 640 774 624 768 616 C756 606 744 603 730 603 C712 603 698 606 690 614 C682 626 682 648 683 666 C684 676 686 684 688 690 C676 686 668 676 664 662 C660 654 658 648 658 640 Z"/></clipPath><rect x="650" y="525" width="160" height="170" filter="url(#knit)" clip-path="url(#bc)" opacity="0.5"/>
<!-- leaves -->
<path d="M580 793 Q610 798 650 810 L705 815 Q735 848 738 872 Q700 872 655 852 Q615 838 598 822 Z" fill="#d4803c"/>
<path d="M608 762 Q652 786 678 814 Q656 834 632 846 Q610 838 604 812 Q601 786 608 762 Z" fill="#b4503c"/>
<path d="M596 815 Q650 810 696 812 Q716 840 718 874 Q692 864 668 850 Q628 836 596 815 Z" fill="#da8a3a"/>
<path d="M716 765 Q730 800 732 834 Q738 854 737 874 Q720 852 708 830 Q696 798 716 765 Z" fill="#c25a38"/>
<path d="M612 770 L650 835 M720 775 L730 860 M600 815 L700 845" stroke="#8e3a26" stroke-width="1.2" fill="none" opacity="0.6"/>
<!-- white pumpkins -->
<ellipse cx="652" cy="869" rx="41" ry="32" fill="#d6d2c6"/>
<ellipse cx="642" cy="864" rx="20" ry="24" fill="#e6e3da"/>
<path d="M632 842 Q624 870 634 898 M668 842 Q676 870 668 898" stroke="#bcb8ac" stroke-width="1.5" fill="none"/>
<path d="M678 843 Q684 838 690 837" stroke="#7d7a55" stroke-width="4" fill="none"/>
<ellipse cx="821" cy="850" rx="42" ry="34" fill="#d4d1c6"/>
<ellipse cx="812" cy="846" rx="20" ry="25" fill="#e4e1d8"/>
<path d="M800 822 Q792 850 802 880 M840 822 Q850 850 842 880" stroke="#bcb8ac" stroke-width="1.5" fill="none"/>
<path d="M822 797 Q824 808 826 819" stroke="#7d7a55" stroke-width="5" fill="none"/>
<!-- orange pumpkin -->
<ellipse cx="763" cy="862" rx="31" ry="25" fill="#de8c2c"/>
<ellipse cx="763" cy="857" rx="18" ry="16" fill="#eaa03c"/>
<path d="M748 842 Q742 862 750 884 M778 842 Q784 862 776 884" stroke="#b86a20" stroke-width="1.5" fill="none"/>
<!-- hands -->
<path d="M660 926 Q664 900 680 884 Q694 870 706 868 Q712 872 704 884 L700 892 Q716 878 728 880 Q738 886 740 902 Q742 915 746 926 Z" fill="#ecc0a2"/>
<path d="M736 926 Q740 904 752 892 Q764 886 774 892 Q778 910 774 926 Z" fill="#e8b99c"/>
<path d="M688 904 Q700 890 716 886 M694 916 Q708 902 726 898 M704 926 Q716 914 734 912" stroke="#d49f84" stroke-width="1.4" fill="none"/>
</g>
</g></svg>
<svg class="a" style="left:0;top:0" width="2048" height="1239" viewBox="0 0 2048 1239"><rect x="406" y="511.5" width="713.5" height="424" fill="none" stroke="#8e8e8e" stroke-width="2.2"/><rect x="398.5" y="504.5" width="14" height="14" fill="#eeeeee" stroke="#d0d0d0" stroke-width="1"/><rect x="1112.5" y="504.5" width="14" height="14" fill="#eeeeee" stroke="#d0d0d0" stroke-width="1"/><rect x="398.5" y="928.5" width="14" height="14" fill="#eeeeee" stroke="#d0d0d0" stroke-width="1"/><rect x="1112.5" y="928.5" width="14" height="14" fill="#eeeeee" stroke="#d0d0d0" stroke-width="1"/></svg>
<div class="a" style="left:687px;top:463px;width:151px;height:27px;background:#262626;border-radius:3px"></div>
<div class="t" style="left:703.0px;top:469.4px;font-size:15.5px;line-height:15.5px;color:#f0f0f0;letter-spacing:0.09px;white-space:pre;">7.65  in x 4.55  in</div>
<svg class="a" style="left:0;top:0" width="2048" height="1239" viewBox="0 0 2048 1239" shape-rendering="crispEdges"><rect x="88" y="128" width="1575" height="32" fill="#f4f4f4"/><rect x="88" y="128" width="30" height="1111" fill="#f4f4f4"/><line x1="129.5" y1="154.5" x2="129.5" y2="159.5" stroke="#b4b4b4" stroke-width="1"/><line x1="141.5" y1="150.5" x2="141.5" y2="159.5" stroke="#b4b4b4" stroke-width="1"/><line x1="153.5" y1="154.5" x2="153.5" y2="159.5" stroke="#b4b4b4" stroke-width="1"/><line x1="164.5" y1="148.5" x2="164.5" y2="159.5" stroke="#b4b4b4" stroke-width="1"/><line x1="176.5" y1="154.5" x2="176.5" y2="159.5" stroke="#b4b4b4" stroke-width="1"/><line x1="188.5" y1="150.5" x2="188.5" y2="159.5" stroke="#b4b4b4" stroke-width="1"/><line x1="199.5" y1="154.5" x2="199.5" y2="159.5" stroke="#b4b4b4" stroke-width="1"/><line x1="211.5" y1="129.5" x2="211.5" y2="159.5" stroke="#b4b4b4" stroke-width="1"/><line x1="223.5" y1="154.5" x2="223.5" y2="159.5" stroke="#b4b4b4" stroke-width="1"/><line x1="234.5" y1="150.5" x2="234.5" y2="159.5" stroke="#b4b4b4" stroke-width="1"/><line x1="246.5" y1="154.5" x2="246.5" y2="159.5" stroke="#b4b4b4" stroke-width="1"/><line x1="258.5" y1="148.5" x2="258.5" y2="159.5" stroke="#b4b4b4" stroke-width="1"/><line x1="269.5" y1="154.5" x2="269.5" y2="159.5" stroke="#b4b4b4" stroke-width="1"/><line x1="281.5" y1="150.5" x2="281.5" y2="159.5" stroke="#b4b4b4" stroke-width="1"/><line x1="293.5" y1="154.5" x2="293.5" y2="159.5" stroke="#b4b4b4" stroke-width="1"/><line x1="304.5" y1="129.5" x2="304.5" y2="159.5" stroke="#b4b4b4" stroke-width="1"/><line x1="316.5" y1="154.5" x2="316.5" y2="159.5" stroke="#b4b4b4" stroke-width="1"/><line x1="328.5" y1="150.5" x2="328.5" y2="159.5" stroke="#b4b4b4" stroke-width="1"/><line x1="339.5" y1="154.5" x2="339.5" y2="159.5" stroke="#b4b4b4" stroke-width="1"/><line x1="351.5" y1="148.5" x2="351.5" y2="159.5" stroke="#b4b4b4" stroke-width="1"/><line x1="363.5" y1="154.5" x2="363.5" y2="159.5" stroke="#b4b4b4" stroke-width="1"/><line x1="374.5" y1="150.5" x2="374.5" y2="159.5" stroke="#b4b4b4" stroke-width="1"/><line x1="386.5" y1="154.5" x2="386.5" y2="159.5" stroke="#b4b4b4" stroke-width="1"/><line x1="398.5" y1="129.5" x2="398.5" y2="159.5" stroke="#b4b4b4" stroke-width="1"/><line x1="409.5" y1="154.5" x2="409.5" y2="159.5" stroke="#b4b4b4" stroke-width="1"/><line x1="421.5" y1="150.5" x2="421.5" y2="159.5" stroke="#b4b4b4" stroke-width="1"/><line x1="433.5" y1="154.5" x2="433.5" y2="159.5" stroke="#b4b4b4" stroke-width="1"/><line x1="444.5" y1="148.5" x2="444.5" y2="159.5" stroke="#b4b4b4" stroke-width="1"/><line x1="456.5" y1="154.5" x2="456.5" y2="159.5" stroke="#b4b4b4" stroke-width="1"/><line x1="468.5" y1="150.5" x2="468.5" y2="159.5" stroke="#b4b4b4" stroke-width="1"/><line x1="479.5" y1="154.5" x2="479.5" y2="159.5" stroke="#b4b4b4" stroke-width="1"/><line x1="491.5" y1="129.5" x2="491.5" y2="159.5" stroke="#b4b4b4" stroke-width="1"/><line x1="503.5" y1="154.5" x2="503.5" y2="159.5" stroke="#b4b4b4" stroke-width="1"/><line x1="514.5" y1="150.5" x2="514.5" y2="159.5" stroke="#b4b4b4" stroke-width="1"/><line x1="526.5" y1="154.5" x2="526.5" y2="159.5" stroke="#b4b4b4" stroke-width="1"/><line x1="538.5" y1="148.5" x2="538.5" y2="159.5" stroke="#b4b4b4" stroke-width="1"/><line x1="549.5" y1="154.5" x2="549.5" y2="159.5" stroke="#b4b4b4" stroke-width="1"/><line x1="561.5" y1="150.5" x2="561.5" y2="159.5" stroke="#b4b4b4" stroke-width="1"/><line x1="573.5" y1="154.5" x2="573.5" y2="159.5" stroke="#b4b4b4" stroke-width="1"/><line x1="584.5" y1="129.5" x2="584.5" y2="159.5" stroke="#b4b4b4" stroke-width="1"/><line x1="596.5" y1="154.5" x2="596.5" y2="159.5" stroke="#b4b4b4" stroke-width="1"/><line x1="608.5" y1="150.5" x2="608.5" y2="159.5" stroke="#b4b4b4" stroke-width="1"/><line x1="619.5" y1="154.5" x2="619.5" y2="159.5" stroke="#b4b4b4" stroke-width="1"/><line x1="631.5" y1="148.5" x2="631.5" y2="159.5" stroke="#b4b4b4" stroke-width="1"/><line x1="643.5" y1="154.5" x2="643.5" y2="159.5" stroke="#b4b4b4" stroke-width="1"/><line x1="654.5" y1="150.5" x2="654.5" y2="159.5" stroke="#b4b4b4" stroke-width="1"/><line x1="666.5" y1="154.5" x2="666.5" y2="159.5" stroke="#b4b4b4" stroke-width="1"/><line x1="678.5" y1="129.5" x2="678.5" y2="159.5" stroke="#b4b4b4" stroke-width="1"/><line x1="689.5" y1="154.5" x2="689.5" y2="159.5" stroke="#b4b4b4" stroke-width="1"/><line x1="701.5" y1="150.5" x2="701.5" y2="159.5" stroke="#b4b4b4" stroke-width="1"/><line x1="713.5" y1="154.5" x2="713.5" y2="159.5" stroke="#b4b4b4" stroke-width="1"/><line x1="724.5" y1="148.5" x2="724.5" y2="159.5" stroke="#b4b4b4" stroke-width="1"/><line x1="736.5" y1="154.5" x2="736.5" y2="159.5" stroke="#b4b4b4" stroke-width="1"/><line x1="748.5" y1="150.5" x2="748.5" y2="159.5" stroke="#b4b4b4" stroke-width="1"/><line x1="759.5" y1="154.5" x2="759.5" y2="159.5" stroke="#b4b4b4" stroke-width="1"/><line x1="771.5" y1="129.5" x2="771.5" y2="159.5" stroke="#b4b4b4" stroke-width="1"/><line x1="783.5" y1="154.5" x2="783.5" y2="159.5" stroke="#b4b4b4" stroke-width="1"/><line x1="794.5" y1="150.5" x2="794.5" y2="159.5" stroke="#b4b4b4" stroke-width="1"/><line x1="806.5" y1="154.5" x2="806.5" y2="159.5" stroke="#b4b4b4" stroke-width="1"/><line x1="818.5" y1="148.5" x2="818.5" y2="159.5" stroke="#b4b4b4" stroke-width="1"/><line x1="829.5" y1="154.5" x2="829.5" y2="159.5" stroke="#b4b4b4" stroke-width="1"/><line x1="841.5" y1="150.5" x2="841.5" y2="159.5" stroke="#b4b4b4" stroke-width="1"/><line x1="853.5" y1="154.5" x2="853.5" y2="159.5" stroke="#b4b4b4" stroke-width="1"/><line x1="864.5" y1="129.5" x2="864.5" y2="159.5" stroke="#b4b4b4" stroke-width="1"/><line x1="876.5" y1="154.5" x2="876.5" y2="159.5" stroke="#b4b4b4" stroke-width="1"/><line x1="888.5" y1="150.5" x2="888.5" y2="159.5" stroke="#b4b4b4" stroke-width="1"/><line x1="899.5" y1="154.5" x2="899.5" y2="159.5" stroke="#b4b4b4" stroke-width="1"/><line x1="911.5" y1="148.5" x2="911.5" y2="159.5" stroke="#b4b4b4" stroke-width="1"/><line x1="923.5" y1="154.5" x2="923.5" y2="159.5" stroke="#b4b4b4" stroke-width="1"/><line x1="934.5" y1="150.5" x2="934.5" y2="159.5" stroke="#b4b4b4" stroke-width="1"/><line x1="946.5" y1="154.5" x2="946.5" y2="159.5" stroke="#b4b4b4" stroke-width="1"/><line x1="958.5" y1="129.5" x2="958.5" y2="159.5" stroke="#b4b4b4" stroke-width="1"/><line x1="969.5" y1="154.5" x2="969.5" y2="159.5" stroke="#b4b4b4" stroke-width="1"/><line x1="981.5" y1="150.5" x2="981.5" y2="159.5" stroke="#b4b4b4" stroke-width="1"/><line x1="993.5" y1="154.5" x2="993.5" y2="159.5" stroke="#b4b4b4" stroke-width="1"/><line x1="1004.5" y1="148.5" x2="1004.5" y2="159.5" stroke="#b4b4b4" stroke-width="1"/><line x1="1016.5" y1="154.5" x2="1016.5" y2="159.5" stroke="#b4b4b4" stroke-width="1"/><line x1="1028.5" y1="150.5" x2="1028.5" y2="159.5" stroke="#b4b4b4" stroke-width="1"/><line x1="1039.5" y1="154.5" x2="1039.5" y2="159.5" stroke="#b4b4b4" stroke-width="1"/><line x1="1051.5" y1="129.5" x2="1051.5" y2="159.5" stroke="#b4b4b4" stroke-width="1"/><line x1="1063.5" y1="154.5" x2="1063.5" y2="159.5" stroke="#b4b4b4" stroke-width="1"/><line x1="1074.5" y1="150.5" x2="1074.5" y2="159.5" stroke="#b4b4b4" stroke-width="1"/><line x1="1086.5" y1="154.5" x2="1086.5" y2="159.5" stroke="#b4b4b4" stroke-width="1"/><line x1="1098.5" y1="148.5" x2="1098.5" y2="159.5" stroke="#b4b4b4" stroke-width="1"/><line x1="1109.5" y1="154.5" x2="1109.5" y2="159.5" stroke="#b4b4b4" stroke-width="1"/><line x1="1121.5" y1="150.5" x2="1121.5" y2="159.5" stroke="#b4b4b4" stroke-width="1"/><line x1="1133.5" y1="154.5" x2="1133.5" y2="159.5" stroke="#b4b4b4" stroke-width="1"/><line x1="1144.5" y1="129.5" x2="1144.5" y2="159.5" stroke="#b4b4b4" stroke-width="1"/><line x1="1156.5" y1="154.5" x2="1156.5" y2="159.5" stroke="#b4b4b4" stroke-width="1"/><line x1="1168.5" y1="150.5" x2="1168.5" y2="159.5" stroke="#b4b4b4" stroke-width="1"/><line x1="1179.5" y1="154.5" x2="1179.5" y2="159.5" stroke="#b4b4b4" stroke-width="1"/><line x1="1191.5" y1="148.5" x2="1191.5" y2="159.5" stroke="#b4b4b4" stroke-width="1"/><line x1="1203.5" y1="154.5" x2="1203.5" y2="159.5" stroke="#b4b4b4" stroke-width="1"/><line x1="1214.5" y1="150.5" x2="1214.5" y2="159.5" stroke="#b4b4b4" stroke-width="1"/><line x1="1226.5" y1="154.5" x2="1226.5" y2="159.5" stroke="#b4b4b4" stroke-width="1"/><line x1="1238.5" y1="129.5" x2="1238.5" y2="159.5" stroke="#b4b4b4" stroke-width="1"/><line x1="1249.5" y1="154.5" x2="1249.5" y2="159.5" stroke="#b4b4b4" stroke-width="1"/><line x1="1261.5" y1="150.5" x2="1261.5" y2="159.5" stroke="#b4b4b4" stroke-width="1"/><line x1="1273.5" y1="154.5" x2="1273.5" y2="159.5" stroke="#b4b4b4" stroke-width="1"/><line x1="1284.5" y1="148.5" x2="1284.5" y2="159.5" stroke="#b4b4b4" stroke-width="1"/><line x1="1296.5" y1="154.5" x2="1296.5" y2="159.5" stroke="#b4b4b4" stroke-width="1"/><line x1="1308.5" y1="150.5" x2="1308.5" y2="159.5" stroke="#b4b4b4" stroke-width="1"/><line x1="1319.5" y1="154.5" x2="1319.5" y2="159.5" stroke="#b4b4b4" stroke-width="1"/><line x1="1331.5" y1="129.5" x2="1331.5" y2="159.5" stroke="#b4b4b4" stroke-width="1"/><line x1="1343.5" y1="154.5" x2="1343.5" y2="159.5" stroke="#b4b4b4" stroke-width="1"/><line x1="1354.5" y1="150.5" x2="1354.5" y2="159.5" stroke="#b4b4b4" stroke-width="1"/><line x1="1366.5" y1="154.5" x2="1366.5" y2="159.5" stroke="#b4b4b4" stroke-width="1"/><line x1="1378.5" y1="148.5" x2="1378.5" y2="159.5" stroke="#b4b4b4" stroke-width="1"/><line x1="1389.5" y1="154.5" x2="1389.5" y2="159.5" stroke="#b4b4b4" stroke-width="1"/><line x1="1401.5" y1="150.5" x2="1401.5" y2="159.5" stroke="#b4b4b4" stroke-width="1"/><line x1="1413.5" y1="154.5" x2="1413.5" y2="159.5" stroke="#b4b4b4" stroke-width="1"/><line x1="1424.5" y1="129.5" x2="1424.5" y2="159.5" stroke="#b4b4b4" stroke-width="1"/><line x1="1436.5" y1="154.5" x2="1436.5" y2="159.5" stroke="#b4b4b4" stroke-width="1"/><line x1="1448.5" y1="150.5" x2="1448.5" y2="159.5" stroke="#b4b4b4" stroke-width="1"/><line x1="1459.5" y1="154.5" x2="1459.5" y2="159.5" stroke="#b4b4b4" stroke-width="1"/><line x1="1471.5" y1="148.5" x2="1471.5" y2="159.5" stroke="#b4b4b4" stroke-width="1"/><line x1="1483.5" y1="154.5" x2="1483.5" y2="159.5" stroke="#b4b4b4" stroke-width="1"/><line x1="1494.5" y1="150.5" x2="1494.5" y2="159.5" stroke="#b4b4b4" stroke-width="1"/><line x1="1506.5" y1="154.5" x2="1506.5" y2="159.5" stroke="#b4b4b4" stroke-width="1"/><line x1="1518.5" y1="129.5" x2="1518.5" y2="159.5" stroke="#b4b4b4" stroke-width="1"/><line x1="1529.5" y1="154.5" x2="1529.5" y2="159.5" stroke="#b4b4b4" stroke-width="1"/><line x1="1541.5" y1="150.5" x2="1541.5" y2="159.5" stroke="#b4b4b4" stroke-width="1"/><line x1="1553.5" y1="154.5" x2="1553.5" y2="159.5" stroke="#b4b4b4" stroke-width="1"/><line x1="1564.5" y1="148.5" x2="1564.5" y2="159.5" stroke="#b4b4b4" stroke-width="1"/><line x1="1576.5" y1="154.5" x2="1576.5" y2="159.5" stroke="#b4b4b4" stroke-width="1"/><line x1="1588.5" y1="150.5" x2="1588.5" y2="159.5" stroke="#b4b4b4" stroke-width="1"/><line x1="1599.5" y1="154.5" x2="1599.5" y2="159.5" stroke="#b4b4b4" stroke-width="1"/><line x1="1611.5" y1="129.5" x2="1611.5" y2="159.5" stroke="#b4b4b4" stroke-width="1"/><line x1="1623.5" y1="154.5" x2="1623.5" y2="159.5" stroke="#b4b4b4" stroke-width="1"/><line x1="1634.5" y1="150.5" x2="1634.5" y2="159.5" stroke="#b4b4b4" stroke-width="1"/><line x1="1646.5" y1="154.5" x2="1646.5" y2="159.5" stroke="#b4b4b4" stroke-width="1"/><line x1="1658.5" y1="148.5" x2="1658.5" y2="159.5" stroke="#b4b4b4" stroke-width="1"/><line x1="109.5" y1="130.5" x2="118.5" y2="130.5" stroke="#b4b4b4" stroke-width="1"/><line x1="113.5" y1="142.5" x2="118.5" y2="142.5" stroke="#b4b4b4" stroke-width="1"/><line x1="88.5" y1="154.5" x2="118.5" y2="154.5" stroke="#b4b4b4" stroke-width="1"/><line x1="113.5" y1="165.5" x2="118.5" y2="165.5" stroke="#b4b4b4" stroke-width="1"/><line x1="109.5" y1="177.5" x2="118.5" y2="177.5" stroke="#b4b4b4" stroke-width="1"/><line x1="113.5" y1="188.5" x2="118.5" y2="188.5" stroke="#b4b4b4" stroke-width="1"/><line x1="107.5" y1="200.5" x2="118.5" y2="200.5" stroke="#b4b4b4" stroke-width="1"/><line x1="113.5" y1="212.5" x2="118.5" y2="212.5" stroke="#b4b4b4" stroke-width="1"/><line x1="109.5" y1="223.5" x2="118.5" y2="223.5" stroke="#b4b4b4" stroke-width="1"/><line x1="113.5" y1="235.5" x2="118.5" y2="235.5" stroke="#b4b4b4" stroke-width="1"/><line x1="88.5" y1="247.5" x2="118.5" y2="247.5" stroke="#b4b4b4" stroke-width="1"/><line x1="113.5" y1="258.5" x2="118.5" y2="258.5" stroke="#b4b4b4" stroke-width="1"/><line x1="109.5" y1="270.5" x2="118.5" y2="270.5" stroke="#b4b4b4" stroke-width="1"/><line x1="113.5" y1="282.5" x2="118.5" y2="282.5" stroke="#b4b4b4" stroke-width="1"/><line x1="107.5" y1="293.5" x2="118.5" y2="293.5" stroke="#b4b4b4" stroke-width="1"/><line x1="113.5" y1="305.5" x2="118.5" y2="305.5" stroke="#b4b4b4" stroke-width="1"/><line x1="109.5" y1="317.5" x2="118.5" y2="317.5" stroke="#b4b4b4" stroke-width="1"/><line x1="113.5" y1="328.5" x2="118.5" y2="328.5" stroke="#b4b4b4" stroke-width="1"/><line x1="88.5" y1="340.5" x2="118.5" y2="340.5" stroke="#b4b4b4" stroke-width="1"/><line x1="113.5" y1="352.5" x2="118.5" y2="352.5" stroke="#b4b4b4" stroke-width="1"/><line x1="109.5" y1="363.5" x2="118.5" y2="363.5" stroke="#b4b4b4" stroke-width="1"/><line x1="113.5" y1="375.5" x2="118.5" y2="375.5" stroke="#b4b4b4" stroke-width="1"/><line x1="107.5" y1="387.5" x2="118.5" y2="387.5" stroke="#b4b4b4" stroke-width="1"/><line x1="113.5" y1="398.5" x2="118.5" y2="398.5" stroke="#b4b4b4" stroke-width="1"/><line x1="109.5" y1="410.5" x2="118.5" y2="410.5" stroke="#b4b4b4" stroke-width="1"/><line x1="113.5" y1="422.5" x2="118.5" y2="422.5" stroke="#b4b4b4" stroke-width="1"/><line x1="88.5" y1="433.5" x2="118.5" y2="433.5" stroke="#b4b4b4" stroke-width="1"/><line x1="113.5" y1="445.5" x2="118.5" y2="445.5" stroke="#b4b4b4" stroke-width="1"/><line x1="109.5" y1="457.5" x2="118.5" y2="457.5" stroke="#b4b4b4" stroke-width="1"/><line x1="113.5" y1="468.5" x2="118.5" y2="468.5" stroke="#b4b4b4" stroke-width="1"/><line x1="107.5" y1="480.5" x2="118.5" y2="480.5" stroke="#b4b4b4" stroke-width="1"/><line x1="113.5" y1="492.5" x2="118.5" y2="492.5" stroke="#b4b4b4" stroke-width="1"/><line x1="109.5" y1="503.5" x2="118.5" y2="503.5" stroke="#b4b4b4" stroke-width="1"/><line x1="113.5" y1="515.5" x2="118.5" y2="515.5" stroke="#b4b4b4" stroke-width="1"/><line x1="88.5" y1="527.5" x2="118.5" y2="527.5" stroke="#b4b4b4" stroke-width="1"/><line x1="113.5" y1="538.5" x2="118.5" y2="538.5" stroke="#b4b4b4" stroke-width="1"/><line x1="109.5" y1="550.5" x2="118.5" y2="550.5" stroke="#b4b4b4" stroke-width="1"/><line x1="113.5" y1="562.5" x2="118.5" y2="562.5" stroke="#b4b4b4" stroke-width="1"/><line x1="107.5" y1="573.5" x2="118.5" y2="573.5" stroke="#b4b4b4" stroke-width="1"/><line x1="113.5" y1="585.5" x2="118.5" y2="585.5" stroke="#b4b4b4" stroke-width="1"/><line x1="109.5" y1="597.5" x2="118.5" y2="597.5" stroke="#b4b4b4" stroke-width="1"/><line x1="113.5" y1="608.5" x2="118.5" y2="608.5" stroke="#b4b4b4" stroke-width="1"/><line x1="88.5" y1="620.5" x2="118.5" y2="620.5" stroke="#b4b4b4" stroke-width="1"/><line x1="113.5" y1="632.5" x2="118.5" y2="632.5" stroke="#b4b4b4" stroke-width="1"/><line x1="109.5" y1="643.5" x2="118.5" y2="643.5" stroke="#b4b4b4" stroke-width="1"/><line x1="113.5" y1="655.5" x2="118.5" y2="655.5" stroke="#b4b4b4" stroke-width="1"/><line x1="107.5" y1="667.5" x2="118.5" y2="667.5" stroke="#b4b4b4" stroke-width="1"/><line x1="113.5" y1="678.5" x2="118.5" y2="678.5" stroke="#b4b4b4" stroke-width="1"/><line x1="109.5" y1="690.5" x2="118.5" y2="690.5" stroke="#b4b4b4" stroke-width="1"/><line x1="113.5" y1="702.5" x2="118.5" y2="702.5" stroke="#b4b4b4" stroke-width="1"/><line x1="88.5" y1="713.5" x2="118.5" y2="713.5" stroke="#b4b4b4" stroke-width="1"/><line x1="113.5" y1="725.5" x2="118.5" y2="725.5" stroke="#b4b4b4" stroke-width="1"/><line x1="109.5" y1="737.5" x2="118.5" y2="737.5" stroke="#b4b4b4" stroke-width="1"/><line x1="113.5" y1="748.5" x2="118.5" y2="748.5" stroke="#b4b4b4" stroke-width="1"/><line x1="107.5" y1="760.5" x2="118.5" y2="760.5" stroke="#b4b4b4" stroke-width="1"/><line x1="113.5" y1="772.5" x2="118.5" y2="772.5" stroke="#b4b4b4" stroke-width="1"/><line x1="109.5" y1="783.5" x2="118.5" y2="783.5" stroke="#b4b4b4" stroke-width="1"/><line x1="113.5" y1="795.5" x2="118.5" y2="795.5" stroke="#b4b4b4" stroke-width="1"/><line x1="88.5" y1="807.5" x2="118.5" y2="807.5" stroke="#b4b4b4" stroke-width="1"/><line x1="113.5" y1="818.5" x2="118.5" y2="818.5" stroke="#b4b4b4" stroke-width="1"/><line x1="109.5" y1="830.5" x2="118.5" y2="830.5" stroke="#b4b4b4" stroke-width="1"/><line x1="113.5" y1="842.5" x2="118.5" y2="842.5" stroke="#b4b4b4" stroke-width="1"/><line x1="107.5" y1="853.5" x2="118.5" y2="853.5" stroke="#b4b4b4" stroke-width="1"/><line x1="113.5" y1="865.5" x2="118.5" y2="865.5" stroke="#b4b4b4" stroke-width="1"/><line x1="109.5" y1="877.5" x2="118.5" y2="877.5" stroke="#b4b4b4" stroke-width="1"/><line x1="113.5" y1="888.5" x2="118.5" y2="888.5" stroke="#b4b4b4" stroke-width="1"/><line x1="88.5" y1="900.5" x2="118.5" y2="900.5" stroke="#b4b4b4" stroke-width="1"/><line x1="113.5" y1="912.5" x2="118.5" y2="912.5" stroke="#b4b4b4" stroke-width="1"/><line x1="109.5" y1="923.5" x2="118.5" y2="923.5" stroke="#b4b4b4" stroke-width="1"/><line x1="113.5" y1="935.5" x2="118.5" y2="935.5" stroke="#b4b4b4" stroke-width="1"/><line x1="107.5" y1="947.5" x2="118.5" y2="947.5" stroke="#b4b4b4" stroke-width="1"/><line x1="113.5" y1="958.5" x2="118.5" y2="958.5" stroke="#b4b4b4" stroke-width="1"/><line x1="109.5" y1="970.5" x2="118.5" y2="970.5" stroke="#b4b4b4" stroke-width="1"/><line x1="113.5" y1="982.5" x2="118.5" y2="982.5" stroke="#b4b4b4" stroke-width="1"/><line x1="88.5" y1="993.5" x2="118.5" y2="993.5" stroke="#b4b4b4" stroke-width="1"/><line x1="113.5" y1="1005.5" x2="118.5" y2="1005.5" stroke="#b4b4b4" stroke-width="1"/><line x1="109.5" y1="1017.5" x2="118.5" y2="1017.5" stroke="#b4b4b4" stroke-width="1"/><line x1="113.5" y1="1028.5" x2="118.5" y2="1028.5" stroke="#b4b4b4" stroke-width="1"/><line x1="107.5" y1="1040.5" x2="118.5" y2="1040.5" stroke="#b4b4b4" stroke-width="1"/><line x1="113.5" y1="1052.5" x2="118.5" y2="1052.5" stroke="#b4b4b4" stroke-width="1"/><line x1="109.5" y1="1063.5" x2="118.5" y2="1063.5" stroke="#b4b4b4" stroke-width="1"/><line x1="113.5" y1="1075.5" x2="118.5" y2="1075.5" stroke="#b4b4b4" stroke-width="1"/><line x1="88.5" y1="1087.5" x2="118.5" y2="1087.5" stroke="#b4b4b4" stroke-width="1"/><line x1="113.5" y1="1098.5" x2="118.5" y2="1098.5" stroke="#b4b4b4" stroke-width="1"/><line x1="109.5" y1="1110.5" x2="118.5" y2="1110.5" stroke="#b4b4b4" stroke-width="1"/><line x1="113.5" y1="1122.5" x2="118.5" y2="1122.5" stroke="#b4b4b4" stroke-width="1"/><line x1="107.5" y1="1133.5" x2="118.5" y2="1133.5" stroke="#b4b4b4" stroke-width="1"/><line x1="113.5" y1="1145.5" x2="118.5" y2="1145.5" stroke="#b4b4b4" stroke-width="1"/><line x1="109.5" y1="1157.5" x2="118.5" y2="1157.5" stroke="#b4b4b4" stroke-width="1"/><line x1="113.5" y1="1168.5" x2="118.5" y2="1168.5" stroke="#b4b4b4" stroke-width="1"/><line x1="88.5" y1="1180.5" x2="118.5" y2="1180.5" stroke="#b4b4b4" stroke-width="1"/><line x1="113.5" y1="1192.5" x2="118.5" y2="1192.5" stroke="#b4b4b4" stroke-width="1"/><line x1="109.5" y1="1203.5" x2="118.5" y2="1203.5" stroke="#b4b4b4" stroke-width="1"/><line x1="113.5" y1="1215.5" x2="118.5" y2="1215.5" stroke="#b4b4b4" stroke-width="1"/><line x1="107.5" y1="1227.5" x2="118.5" y2="1227.5" stroke="#b4b4b4" stroke-width="1"/><line x1="113.5" y1="1238.5" x2="118.5" y2="1238.5" stroke="#b4b4b4" stroke-width="1"/><line x1="88" y1="159.5" x2="1660" y2="159.5" stroke="#c4c4c4" stroke-width="1"/><line x1="118.5" y1="128" x2="118.5" y2="1239" stroke="#c4c4c4" stroke-width="1"/></svg>
<div class="t" style="left:122.7px;top:132.9px;font-size:15px;line-height:15px;color:#585858;-webkit-text-stroke:0.25px #585858;">0</div>
<div class="t" style="left:216.0px;top:132.9px;font-size:15px;line-height:15px;color:#585858;-webkit-text-stroke:0.25px #585858;">1</div>
<div class="t" style="left:309.4px;top:132.9px;font-size:15px;line-height:15px;color:#585858;-webkit-text-stroke:0.25px #585858;">2</div>
<div class="t" style="left:402.7px;top:132.9px;font-size:15px;line-height:15px;color:#585858;-webkit-text-stroke:0.25px #585858;">3</div>
<div class="t" style="left:496.0px;top:132.9px;font-size:15px;line-height:15px;color:#585858;-webkit-text-stroke:0.25px #585858;">4</div>
<div class="t" style="left:589.4px;top:132.9px;font-size:15px;line-height:15px;color:#585858;-webkit-text-stroke:0.25px #585858;">5</div>
<div class="t" style="left:682.7px;top:132.9px;font-size:15px;line-height:15px;color:#585858;-webkit-text-stroke:0.25px #585858;">6</div>
<div class="t" style="left:776.0px;top:132.9px;font-size:15px;line-height:15px;color:#585858;-webkit-text-stroke:0.25px #585858;">7</div>
<div class="t" style="left:869.4px;top:132.9px;font-size:15px;line-height:15px;color:#585858;-webkit-text-stroke:0.25px #585858;">8</div>
<div class="t" style="left:962.7px;top:132.9px;font-size:15px;line-height:15px;color:#585858;-webkit-text-stroke:0.25px #585858;">9</div>
<div class="t" style="left:1056.0px;top:132.9px;font-size:15px;line-height:15px;color:#585858;-webkit-text-stroke:0.25px #585858;">10</div>
<div class="t" style="left:1149.4px;top:132.9px;font-size:15px;line-height:15px;color:#585858;-webkit-text-stroke:0.25px #585858;">11</div>
<div class="t" style="left:1242.7px;top:132.9px;font-size:15px;line-height:15px;color:#585858;-webkit-text-stroke:0.25px #585858;">12</div>
<div class="t" style="left:1336.0px;top:132.9px;font-size:15px;line-height:15px;color:#585858;-webkit-text-stroke:0.25px #585858;">13</div>
<div class="t" style="left:1429.4px;top:132.9px;font-size:15px;line-height:15px;color:#585858;-webkit-text-stroke:0.25px #585858;">14</div>
<div class="t" style="left:1522.7px;top:132.9px;font-size:15px;line-height:15px;color:#585858;-webkit-text-stroke:0.25px #585858;">15</div>
<div class="t" style="left:1616.0px;top:132.9px;font-size:15px;line-height:15px;color:#585858;-webkit-text-stroke:0.25px #585858;">16</div>
<div class="t" style="left:89.5px;top:159.5px;width:15px;height:8.3px;"><div style="position:absolute;left:0;top:0;transform-origin:0 0;transform:translate(0px,8.3px) rotate(-90deg);font-size:15px;line-height:15px;color:#5f5f5f;white-space:nowrap">2</div></div>
<div class="t" style="left:89.5px;top:252.8px;width:15px;height:8.3px;"><div style="position:absolute;left:0;top:0;transform-origin:0 0;transform:translate(0px,8.3px) rotate(-90deg);font-size:15px;line-height:15px;color:#5f5f5f;white-space:nowrap">3</div></div>
<div class="t" style="left:89.5px;top:346.2px;width:15px;height:8.3px;"><div style="position:absolute;left:0;top:0;transform-origin:0 0;transform:translate(0px,8.3px) rotate(-90deg);font-size:15px;line-height:15px;color:#5f5f5f;white-space:nowrap">4</div></div>
<div class="t" style="left:89.5px;top:439.5px;width:15px;height:8.3px;"><div style="position:absolute;left:0;top:0;transform-origin:0 0;transform:translate(0px,8.3px) rotate(-90deg);font-size:15px;line-height:15px;color:#5f5f5f;white-space:nowrap">5</div></div>
<div class="t" style="left:89.5px;top:532.8px;width:15px;height:8.3px;"><div style="position:absolute;left:0;top:0;transform-origin:0 0;transform:translate(0px,8.3px) rotate(-90deg);font-size:15px;line-height:15px;color:#5f5f5f;white-space:nowrap">6</div></div>
<div class="t" style="left:89.5px;top:626.2px;width:15px;height:8.3px;"><div style="position:absolute;left:0;top:0;transform-origin:0 0;transform:translate(0px,8.3px) rotate(-90deg);font-size:15px;line-height:15px;color:#5f5f5f;white-space:nowrap">7</div></div>
<div class="t" style="left:89.5px;top:719.5px;width:15px;height:8.3px;"><div style="position:absolute;left:0;top:0;transform-origin:0 0;transform:translate(0px,8.3px) rotate(-90deg);font-size:15px;line-height:15px;color:#5f5f5f;white-space:nowrap">8</div></div>
<div class="t" style="left:89.5px;top:812.8px;width:15px;height:8.3px;"><div style="position:absolute;left:0;top:0;transform-origin:0 0;transform:translate(0px,8.3px) rotate(-90deg);font-size:15px;line-height:15px;color:#5f5f5f;white-space:nowrap">9</div></div>
<div class="t" style="left:89.5px;top:906.2px;width:15px;height:16.7px;"><div style="position:absolute;left:0;top:0;transform-origin:0 0;transform:translate(0px,16.7px) rotate(-90deg);font-size:15px;line-height:15px;color:#5f5f5f;white-space:nowrap">10</div></div>
<div class="t" style="left:89.5px;top:999.5px;width:15px;height:15.6px;"><div style="position:absolute;left:0;top:0;transform-origin:0 0;transform:translate(0px,15.6px) rotate(-90deg);font-size:15px;line-height:15px;color:#5f5f5f;white-space:nowrap">11</div></div>
<div class="t" style="left:89.5px;top:1092.8px;width:15px;height:16.7px;"><div style="position:absolute;left:0;top:0;transform-origin:0 0;transform:translate(0px,16.7px) rotate(-90deg);font-size:15px;line-height:15px;color:#5f5f5f;white-space:nowrap">12</div></div>
<div class="t" style="left:89.5px;top:1186.2px;width:15px;height:16.7px;"><div style="position:absolute;left:0;top:0;transform-origin:0 0;transform:translate(0px,16.7px) rotate(-90deg);font-size:15px;line-height:15px;color:#5f5f5f;white-space:nowrap">13</div></div>
<div class="a" style="left:118px;top:1214px;width:1542px;height:25px;background:linear-gradient(rgba(0,0,0,0),rgba(0,0,0,0.035))"></div>
<div class="a" style="left:131px;top:1167px;width:152px;height:43px;border-radius:22px;background:rgba(225,225,225,0.55)"></div>
<svg class="a" style="left:0;top:0" width="2048" height="1239" viewBox="0 0 2048 1239"><circle cx="151.5" cy="1188.3" r="11.5" fill="none" stroke="#c6c6c6" stroke-width="1.6"/><line x1="145" y1="1188.3" x2="158" y2="1188.3" stroke="#c6c6c6" stroke-width="1.6"/><circle cx="262.5" cy="1188.3" r="11.5" fill="none" stroke="#c6c6c6" stroke-width="1.6"/><line x1="256" y1="1188.3" x2="269" y2="1188.3" stroke="#c6c6c6" stroke-width="1.6"/><line x1="262.5" y1="1181.8" x2="262.5" y2="1194.8" stroke="#c6c6c6" stroke-width="1.6"/></svg>
<div class="t" style="left:174.0px;top:1175.5px;font-size:26px;line-height:26px;color:#c8c8c8;letter-spacing:-0.23px;">100%</div>

<div class="a" style="left:0;top:0;width:2048px;height:64px;background:#3e4245;border-top:2px solid #2e3134"></div>
<svg class="a" style="left:0;top:0" width="2048" height="64" viewBox="0 0 2048 64"><g stroke="#f4f4f4" stroke-width="2.6" stroke-linecap="round"><line x1="28.5" y1="24.6" x2="57.5" y2="24.6"/><line x1="28.5" y1="32.2" x2="57.5" y2="32.2"/><line x1="28.5" y1="39.8" x2="57.5" y2="39.8"/></g><g fill="none" stroke="#eeeeee" stroke-width="2"><path d="M1467 40 L1486 40 Q1482 36 1482 30 Q1482 22 1476.5 21 Q1471 22 1471 30 Q1471 36 1467 40 Z" stroke-linejoin="round"/><path d="M1474 42.5 Q1476.5 45 1479 42.5"/><line x1="1476.5" y1="19" x2="1476.5" y2="21"/></g><path d="M1802 29 L1810.5 37.5 L1819 29" fill="none" stroke="#eeeeee" stroke-width="2"/><line x1="1682" y1="24" x2="1682" y2="41" stroke="#eeeeee" stroke-width="2"/></svg>
<div class="t" style="left:88.6px;top:22.0px;font-size:21px;line-height:21px;color:#f2f2f2;letter-spacing:-0.16px;">Canvas</div>
<div class="t" style="left:655.7px;top:22.0px;font-size:21px;line-height:21px;color:#f2f2f2;letter-spacing:0.04px;">Layered Paper Pumpkin Frame*</div>
<div class="t" style="left:1506.8px;top:22.0px;font-size:21px;line-height:21px;color:#f2f2f2;letter-spacing:0.30px;">My Stuff</div>
<div class="t" style="left:1601.8px;top:22.0px;font-size:21px;line-height:21px;color:#f2f2f2;letter-spacing:-0.61px;">Save</div>
<div class="t" style="left:1716.0px;top:22.0px;font-size:21px;line-height:21px;color:#f2f2f2;letter-spacing:0.30px;">Explore</div>
<div class="a" style="left:1867px;top:11px;width:171px;height:42px;border-radius:21px;background:#35835a"></div>
<div class="t" style="left:1927.0px;top:25.1px;font-size:16px;line-height:16px;color:#ffffff;font-weight:bold;letter-spacing:-0.21px;">Make It</div>
<div class="a" style="left:0;top:64px;width:88px;height:1175px;background:#cccccc"></div>
<svg class="a" style="left:0;top:0" width="88" height="1239" viewBox="0 0 88 1239"><circle cx="42.8" cy="94" r="12.2" fill="none" stroke="#3d4043" stroke-width="1.8"/><line x1="36" y1="94" x2="49.6" y2="94" stroke="#3d4043" stroke-width="1.8"/><line x1="42.8" y1="87.2" x2="42.8" y2="100.8" stroke="#3d4043" stroke-width="1.8"/><path d="M36 174 L31 177 Q29.5 178 30.5 180 L33 186 L36 184.5 L36 197 L50 197 L50 184.5 L53 186 L55.5 180 Q56.5 178 55 177 L50 174 Q43 178 36 174 Z" fill="none" stroke="#3d4043" stroke-width="1.8" stroke-linejoin="round"/><path d="M39.5 181 l0 2 M39.5 187 l0 2 M46.5 181 l0 2 M46.5 187 l0 2 M41 180 l4 0 M41 190 l4 0" stroke="#3d4043" stroke-width="1.3"/><rect x="34" y="267" width="17.5" height="21.5" rx="1.5" fill="none" stroke="#3d4043" stroke-width="1.8"/><path d="M34 267 L46 263.5 L47 267" fill="none" stroke="#3d4043" stroke-width="1.6"/><path d="M42.7 279 L38.8 275 Q37.5 273 39.5 271.6 Q41.5 270.8 42.7 272.6 Q44 270.8 46 271.6 Q48 273 46.6 275 Z" fill="none" stroke="#3d4043" stroke-width="1.5"/><line x1="38.5" y1="283" x2="47" y2="283" stroke="#3d4043" stroke-width="1.6"/><path d="M40 354 L31 371 L46 371 Z" fill="none" stroke="#3d4043" stroke-width="1.8" stroke-linejoin="round"/><circle cx="47.5" cy="372" r="7" fill="none" stroke="#3d4043" stroke-width="1.8"/><path d="M42.7 445 Q33 445 33.5 455 Q34 462 39.5 466 L46 466 Q51.5 462 52 455 Q52.5 445 42.7 445 Z" fill="none" stroke="#3d4043" stroke-width="1.8"/><path d="M42.7 445 Q38 452 39.5 466 M42.7 445 Q47.5 452 46 466" fill="none" stroke="#3d4043" stroke-width="1.4"/><rect x="39.5" y="467" width="6.5" height="4" fill="none" stroke="#3d4043" stroke-width="1.6"/><path d="M34 540 L34 537.5 L51.5 537.5 L51.5 540 M42.7 537.5 L42.7 557 M38.5 557 L47 557" fill="none" stroke="#3d4043" stroke-width="1.9"/><path d="M42.7 627 Q53.5 627 53.5 637.5 Q53.5 641 52 643.5 L54 649 L48 647 Q45.5 648 42.7 648 Q32 648 32 637.5 Q32 627 42.7 627 Z" fill="none" stroke="#3d4043" stroke-width="1.8" stroke-linejoin="round"/><line x1="37" y1="635" x2="48" y2="635" stroke="#3d4043" stroke-width="1.6"/><line x1="37" y1="640.5" x2="48" y2="640.5" stroke="#3d4043" stroke-width="1.6"/><path d="M30.5 714.5 L41.5 706.5 L40 720.5 L37 716.5 Z" fill="#3d4043"/><path d="M44 714 L51.2 714 L51.2 730.3 L34.9 730.3 L34.9 721" fill="none" stroke="#3d4043" stroke-width="1.7"/><circle cx="51.2" cy="714" r="2.3" fill="#cccccc" stroke="#3d4043" stroke-width="1.5"/><circle cx="51.2" cy="730.3" r="2.3" fill="#cccccc" stroke="#3d4043" stroke-width="1.5"/><circle cx="34.9" cy="730.3" r="2.3" fill="#cccccc" stroke="#3d4043" stroke-width="1.5"/><path d="M33.5 813.5 L33.5 810 L52 810 L52 813.5" fill="none" stroke="#3d4043" stroke-width="1.8"/><path d="M42.7 829.5 L42.7 816.5 M37 822 L42.7 816 L48.5 822" fill="none" stroke="#3d4043" stroke-width="1.9"/><g fill="none" stroke="#3d4043" stroke-width="1.8"><line x1="29.5" y1="904" x2="56" y2="904"/><line x1="29.5" y1="907.5" x2="56" y2="907.5"/><path d="M30.5 927 L30.5 911 L43 911 L43 927 M36.8 911 L36.8 927"/><path d="M55 914 Q55 911 50.5 911 Q46.5 911 46.5 919 Q46.5 927 50.5 927 Q55 927 55 921 L50.5 921"/></g></svg>
<div class="t" style="left:29.7px;top:119.7px;font-size:13.4px;line-height:13.4px;color:#45484b;letter-spacing:-0.30px;">New</div>
<div class="t" style="left:12.3px;top:210.2px;font-size:13.4px;line-height:13.4px;color:#45484b;letter-spacing:-0.01px;">Templates</div>
<div class="t" style="left:18.8px;top:300.7px;font-size:13.4px;line-height:13.4px;color:#45484b;letter-spacing:-0.06px;">Projects</div>
<div class="t" style="left:18.8px;top:391.7px;font-size:13.4px;line-height:13.4px;color:#45484b;letter-spacing:0.51px;">Shapes</div>
<div class="t" style="left:19.8px;top:482.7px;font-size:13.4px;line-height:13.4px;color:#45484b;letter-spacing:0.41px;">Images</div>
<div class="t" style="left:30.3px;top:572.7px;font-size:13.4px;line-height:13.4px;color:#45484b;letter-spacing:0.15px;">Text</div>
<div class="t" style="left:18.8px;top:663.7px;font-size:13.4px;line-height:13.4px;color:#45484b;letter-spacing:-0.19px;">Phrases</div>
<div class="t" style="left:18.3px;top:749.7px;font-size:13.4px;line-height:13.4px;color:#45484b;letter-spacing:0.08px;">Editable</div>
<div class="t" style="left:19.8px;top:769.7px;font-size:13.4px;line-height:13.4px;color:#45484b;letter-spacing:0.41px;">Images</div>
<div class="t" style="left:20.8px;top:845.7px;font-size:13.4px;line-height:13.4px;color:#45484b;letter-spacing:0.31px;">Upload</div>
<div class="t" style="left:9.8px;top:935.7px;font-size:13.4px;line-height:13.4px;color:#45484b;letter-spacing:0.28px;">Monogram</div>
<div class="a" style="left:88px;top:64px;width:1576px;height:64px;background:#ffffff"></div>
<div class="a" style="left:88px;top:128px;width:1576px;height:2px;background:#cdcdcd"></div>
<svg class="a" style="left:0;top:0" width="1664" height="130" viewBox="0 0 1664 130"><path d="M114 100 L130 100 Q135 100 135 105 Q135 109.5 130 109.5 L124 109.5" fill="none" stroke="#3b3e41" stroke-width="2" stroke-linecap="round"/><path d="M119 94 L113 100 L119 106" fill="none" stroke="#3b3e41" stroke-width="2" stroke-linecap="round" stroke-linejoin="round"/><path d="M183 100 L167 100 Q162 100 162 105 Q162 109.5 167 109.5 L173 109.5" fill="none" stroke="#c6c6c6" stroke-width="2" stroke-linecap="round"/><path d="M178 94 L184 100 L178 106" fill="none" stroke="#c6c6c6" stroke-width="2" stroke-linecap="round" stroke-linejoin="round"/><line x1="207.5" y1="75" x2="207.5" y2="119" stroke="#d6d6d6" stroke-width="1.5"/><line x1="388.5" y1="75" x2="388.5" y2="119" stroke="#d6d6d6" stroke-width="1.5"/><line x1="538.5" y1="75" x2="538.5" y2="119" stroke="#d6d6d6" stroke-width="1.5"/><line x1="735" y1="75" x2="735" y2="119" stroke="#d6d6d6" stroke-width="1.5"/><line x1="811" y1="75" x2="811" y2="119" stroke="#d6d6d6" stroke-width="1.5"/><line x1="890.5" y1="75" x2="890.5" y2="119" stroke="#d6d6d6" stroke-width="1.5"/><line x1="1131.5" y1="75" x2="1131.5" y2="119" stroke="#d6d6d6" stroke-width="1.5"/><line x1="1276.5" y1="75" x2="1276.5" y2="119" stroke="#d6d6d6" stroke-width="1.5"/><rect x="227.5" y="95.5" width="111" height="22" rx="2" fill="#fff" stroke="#d4d4d4" stroke-width="1"/><path d="M324.5 102 L331.5 102 L328 108.5 Z" fill="#3b3e41"/><rect x="346.5" y="95.5" width="22" height="22" rx="2" fill="#fff" stroke="#d4d4d4" stroke-width="1"/><rect x="348" y="100" width="19" height="12" fill="#c89848"/><path d="M351.5 112 Q352 106 357.5 105.5 Q363 106 363.5 112 Z" fill="#2b2e38"/><circle cx="357.5" cy="104" r="2.3" fill="#e8c8a8"/><ellipse cx="354" cy="110" rx="2" ry="1.5" fill="#d8d4c8"/><ellipse cx="361" cy="110" rx="2" ry="1.5" fill="#d8d4c8"/><g fill="none" stroke="#3b3e41" stroke-width="1.8"><path d="M426.5 102 L426.5 98 L430.5 98 M434 98 L438 98 M441.5 98 L445.5 98 L445.5 102 M445.5 105.5 L445.5 109 M426.5 105.5 L426.5 109.5 M426.5 113 L426.5 117 L430.5 117 M434 117 L438 117"/><circle cx="432.5" cy="103.5" r="1.8"/><circle cx="439.5" cy="103.5" r="1.8"/><circle cx="432.5" cy="110.5" r="1.8"/></g><path d="M439 108 L447 111.5 L443.5 113 L442 117 Z" fill="#3b3e41"/><path d="M487.5 117 L489 110.5 L501 98.5 Q503 96.5 505 98.5 Q507 100.5 505 102.5 L493 114.5 Z M498.5 101 L502.5 105" fill="none" stroke="#3b3e41" stroke-width="1.8" stroke-linejoin="round"/><path d="M512.5 104 L519.5 104 L516 110 Z" fill="#3b3e41"/><line x1="563.5" y1="99" x2="563.5" y2="116" stroke="#cfcfcf" stroke-width="1.6"/><rect x="567" y="103" width="15" height="8.5" rx="1.5" fill="none" stroke="#cfcfcf" stroke-width="1.6"/><path d="M587.5 104.5 L594 104.5 L590.7 110 Z" fill="#d0d0d0"/><g fill="none" stroke="#3b3e41" stroke-width="1.8"><path d="M623 110 L617.5 110 L617.5 99 L628.5 99 L628.5 104"/><rect x="621.5" y="103" width="10.5" height="10.5"/><path d="M632 110 L635.5 110 L635.5 117 L625 117 L625 113.5"/></g><path d="M641.5 104 L648.5 104 L645 110 Z" fill="#3b3e41"/><g fill="none" stroke="#3b3e41" stroke-width="1.8" stroke-linejoin="round"><path d="M691.5 98 L684.5 117 L691.5 117 Z"/><path d="M694.5 98 L701.5 117 L694.5 117 Z"/></g><path d="M708.5 104 L715.5 104 L712 110 Z" fill="#3b3e41"/><g fill="none" stroke="#3b3e41" stroke-width="1.6"><path d="M767.5 97.5 L778 105 L774 117 L761 117 L757 105 Z" stroke-dasharray="3 2.2"/><path d="M767.5 102 L773.5 106.5 L771 113.5 L764 113.5 L761.5 106.5 Z"/></g><path d="M783.5 104 L790.5 104 L787 110 Z" fill="#3b3e41"/><g fill="none" stroke="#cfcfcf" stroke-width="1.6"><path d="M834 103 Q846 106 858 103 L858 117 Q846 114 834 117 Z"/><line x1="842" y1="104.5" x2="842" y2="115.5"/><line x1="850" y1="104.5" x2="850" y2="115.5"/></g><path d="M865 106 L871.5 106 L868.3 111.5 Z" fill="#d0d0d0"/><rect x="930.5" y="95.5" width="72.5" height="22" rx="2.5" fill="#fff" stroke="#d4d4d4" stroke-width="1"/><line x1="986" y1="96" x2="986" y2="117" stroke="#d4d4d4" stroke-width="1"/><path d="M990.7 104.5 L998.3 104.5 L994.5 98.5 Z M990.7 108.5 L998.3 108.5 L994.5 114.5 Z" fill="#3b3e41"/><rect x="1040" y="95.5" width="72" height="22" rx="2.5" fill="#fff" stroke="#d4d4d4" stroke-width="1"/><line x1="1095" y1="96" x2="1095" y2="117" stroke="#d4d4d4" stroke-width="1"/><path d="M1099.7 104.5 L1107.3 104.5 L1103.5 98.5 Z M1099.7 108.5 L1107.3 108.5 L1103.5 114.5 Z" fill="#3b3e41"/><rect x="1185" y="95.5" width="72.5" height="22" rx="2.5" fill="#fff" stroke="#d4d4d4" stroke-width="1"/><line x1="1240.5" y1="96" x2="1240.5" y2="117" stroke="#d4d4d4" stroke-width="1"/><path d="M1245.2 104.5 L1252.8 104.5 L1249.0 98.5 Z M1245.2 108.5 L1252.8 108.5 L1249.0 114.5 Z" fill="#3b3e41"/><rect x="1313" y="95.5" width="72" height="22" rx="2.5" fill="#fff" stroke="#d4d4d4" stroke-width="1"/><line x1="1368" y1="96" x2="1368" y2="117" stroke="#d4d4d4" stroke-width="1"/><path d="M1372.7 104.5 L1380.3 104.5 L1376.5 98.5 Z M1372.7 108.5 L1380.3 108.5 L1376.5 114.5 Z" fill="#3b3e41"/><rect x="1413.5" y="95.5" width="73.0" height="22" rx="2.5" fill="#fff" stroke="#d4d4d4" stroke-width="1"/><line x1="1469" y1="96" x2="1469" y2="117" stroke="#d4d4d4" stroke-width="1"/><path d="M1473.95 104.5 L1481.55 104.5 L1477.75 98.5 Z M1473.95 108.5 L1481.55 108.5 L1477.75 114.5 Z" fill="#3b3e41"/><g fill="none" stroke="#3b3e41" stroke-width="1.8"><rect x="1018.5" y="85" width="12" height="9" rx="1"/><path d="M1020.5 85 L1020.5 82 Q1020.5 78.5 1024.5 78.5 Q1028.5 78.5 1028.5 82 L1028.5 85"/></g><line x1="1024.5" y1="88" x2="1024.5" y2="91" stroke="#3b3e41" stroke-width="1.6"/><path d="M1006 94 L1006 88 L1011 88 M1037 88 L1042 88 L1042 94" fill="none" stroke="#b5b5b5" stroke-width="1.2"/><g fill="none" stroke="#3b3e41" stroke-width="1.9" stroke-linecap="round"><path d="M1157 106 Q1157 99 1164.5 99 Q1169 99 1172 102"/><path d="M1172 110 Q1172 116.5 1164.5 116.5 Q1160 116.5 1157 113.5"/></g><path d="M1174.5 98.5 L1174.5 105 L1168 105 Z M1154.5 117 L1154.5 110.5 L1161 110.5 Z" fill="#3b3e41"/></svg>
<div class="t" style="left:227.0px;top:76.1px;font-size:13.5px;line-height:13.5px;color:#585b5e;letter-spacing:0.17px;">Operation</div>
<div class="t" style="left:408.5px;top:76.1px;font-size:13.5px;line-height:13.5px;color:#585b5e;letter-spacing:0.03px;">Select All</div>
<div class="t" style="left:489.7px;top:76.1px;font-size:13.5px;line-height:13.5px;color:#585b5e;letter-spacing:-0.06px;">Edit</div>
<div class="t" style="left:561.6px;top:76.1px;font-size:13.5px;line-height:13.5px;color:#c9c9c9;letter-spacing:-0.06px;">Align</div>
<div class="t" style="left:613.5px;top:76.1px;font-size:13.5px;line-height:13.5px;color:#585b5e;letter-spacing:-0.09px;">Arrange</div>
<div class="t" style="left:687.5px;top:76.1px;font-size:13.5px;line-height:13.5px;color:#585b5e;letter-spacing:-0.12px;">Flip</div>
<div class="t" style="left:755.0px;top:76.1px;font-size:13.5px;line-height:13.5px;color:#585b5e;letter-spacing:0.17px;">Offset</div>
<div class="t" style="left:835.3px;top:76.1px;font-size:13.5px;line-height:13.5px;color:#c9c9c9;letter-spacing:-0.02px;">Warp</div>
<div class="t" style="left:911.3px;top:76.1px;font-size:13.5px;line-height:13.5px;color:#585b5e;letter-spacing:-0.52px;">Size</div>
<div class="t" style="left:1152.0px;top:76.1px;font-size:13.5px;line-height:13.5px;color:#585b5e;letter-spacing:-0.20px;">Rotate</div>
<div class="t" style="left:1297.0px;top:76.1px;font-size:13.5px;line-height:13.5px;color:#585b5e;letter-spacing:-0.11px;">Position</div>
<div class="t" style="left:234.8px;top:99.6px;font-size:14px;line-height:14px;color:#3f4245;letter-spacing:-0.31px;">Print Then Cut</div>
<div class="t" style="left:911.7px;top:100.1px;font-size:13.5px;line-height:13.5px;color:#585b5e;">W</div>
<div class="t" style="left:1023.7px;top:100.1px;font-size:13.5px;line-height:13.5px;color:#585b5e;">H</div>
<div class="t" style="left:1297.6px;top:100.1px;font-size:13.5px;line-height:13.5px;color:#585b5e;">X</div>
<div class="t" style="left:1399.3px;top:100.1px;font-size:13.5px;line-height:13.5px;color:#585b5e;">Y</div>
<div class="t" style="left:937.3px;top:99.7px;font-size:14.5px;line-height:14.5px;color:#46494c;letter-spacing:-0.57px;">7.647</div>
<div class="t" style="left:1047.0px;top:99.7px;font-size:14.5px;line-height:14.5px;color:#46494c;letter-spacing:-0.57px;">4.545</div>
<div class="t" style="left:1192.0px;top:100.2px;font-size:14.5px;line-height:14.5px;color:#46494c;">0</div>
<div class="t" style="left:1319.5px;top:99.7px;font-size:14.5px;line-height:14.5px;color:#46494c;letter-spacing:-0.57px;">3.087</div>
<div class="t" style="left:1420.5px;top:99.7px;font-size:14.5px;line-height:14.5px;color:#46494c;">5.83</div>
<div class="a" style="left:1662px;top:64px;width:386px;height:1175px;background:#fefefe;border-left:1px solid #dedede"></div>
<div class="a" style="left:1663px;top:125px;width:385px;height:1.5px;background:#e3e3e3"></div>
<div class="a" style="left:1665.5px;top:122px;width:98px;height:4px;background:#2b7d52"></div>
<div class="t" style="left:1686.7px;top:86.8px;font-size:18.5px;line-height:18.5px;color:#2b7d52;letter-spacing:0.02px;-webkit-text-stroke:0.45px #2b7d52;">Layers</div>
<div class="t" style="left:1784.0px;top:85.9px;font-size:19px;line-height:19px;color:#3b3e41;letter-spacing:0.08px;">Color Sync</div>
<div class="a" style="left:1663px;top:191px;width:385px;height:1.5px;background:#e6e6e6"></div>
<div class="a" style="left:1671px;top:706px;width:377px;height:72.5px;background:#c5e9dc;border-radius:5px 0 0 5px"></div>
<svg class="a" style="left:0;top:0" width="2048" height="1239" viewBox="0 0 2048 1239"><g fill="none" stroke="#d6d6d6" stroke-width="1.6"><path d="M1690 151.29166666666666 L1690 146.5 L1694.7916666666667 146.5 M1708.2083333333333 146.5 L1713.0 146.5 L1713.0 151.29166666666666 M1713.0 164.70833333333334 L1713.0 169.5 L1708.2083333333333 169.5 M1694.7916666666667 169.5 L1690 169.5 L1690 164.70833333333334"/><rect x="1694.7916666666667" y="151.29166666666666" width="8.625" height="8.625" rx="1"/><rect x="1699.1041666666667" y="155.60416666666666" width="8.625" height="8.625" rx="1"/></g><g fill="none" stroke="#303336" stroke-width="1.9"><path d="M1747 165 L1743 165 L1743 147.5 L1760.5 147.5 L1760.5 151.5"/><rect x="1747" y="151.5" width="18" height="17.5"/><line x1="1756" y1="155" x2="1756" y2="165.5"/><line x1="1750.5" y1="160.3" x2="1761.5" y2="160.3"/></g><g fill="none" stroke="#303336" stroke-width="1.9" stroke-linejoin="round"><line x1="1793.5" y1="151" x2="1818" y2="151"/><path d="M1801 151 L1801 147 L1810.5 147 L1810.5 151"/><path d="M1796 151 L1798.5 169 L1813 169 L1815.5 151"/><line x1="1803" y1="156" x2="1803" y2="164"/><line x1="1808.5" y1="156" x2="1808.5" y2="164"/></g><path d="M1685 225 L1691.5 231.5 L1698 225" fill="none" stroke="#a9a9a9" stroke-width="1.8"/><g fill="none" stroke="#a0a0a0" stroke-width="1.7"><path d="M1716.5 224.1875 L1716.5 219.5 L1721.1875 219.5 M1734.3125 219.5 L1739.0 219.5 L1739.0 224.1875 M1739.0 237.3125 L1739.0 242.0 L1734.3125 242.0 M1721.1875 242.0 L1716.5 242.0 L1716.5 237.3125"/><rect x="1721.1875" y="224.1875" width="8.4375" height="8.4375" rx="1"/><rect x="1725.40625" y="228.40625" width="8.4375" height="8.4375" rx="1"/></g><g fill="none" stroke="#a9a9a9" stroke-width="1.7"><path d="M1979 230 Q1987 221 1995 230 Q1987 239 1979 230 Z"/><line x1="1980.5" y1="222.5" x2="1994.5" y2="237.5"/></g><path d="M1685 592 L1691.5 598.5 L1698 592" fill="none" stroke="#3b3e41" stroke-width="1.9"/><g fill="none" stroke="#3b3e41" stroke-width="1.8"><path d="M1716.5 589.6875 L1716.5 585 L1721.1875 585 M1734.3125 585 L1739.0 585 L1739.0 589.6875 M1739.0 602.8125 L1739.0 607.5 L1734.3125 607.5 M1721.1875 607.5 L1716.5 607.5 L1716.5 602.8125"/><rect x="1721.1875" y="589.6875" width="8.4375" height="8.4375" rx="1"/><rect x="1725.40625" y="593.90625" width="8.4375" height="8.4375" rx="1"/></g><path d="M1987 298 L1992 303 L1987 308 L1982 303 Z" fill="#a9a9a9"/><path d="M1987 371 L1992 376 L1987 381 L1982 376 Z" fill="#a9a9a9"/><path d="M1987 443.5 L1992 448.5 L1987 453.5 L1982 448.5 Z" fill="#a9a9a9"/><path d="M1987 516.5 L1992 521.5 L1987 526.5 L1982 521.5 Z" fill="#a9a9a9"/><path d="M1755.5 293 Q1769 285.5 1783 293 Q1778 304 1780 314 Q1770 313 1758.5 317 Q1760.5 304 1755.5 293 Z" fill="#d3d3d3"/><rect x="1765.5" y="361" width="7" height="6" fill="none" stroke="#c8c8c8" stroke-width="1.5"/><ellipse cx="1769" cy="377" rx="14" ry="12.5" fill="#bdbdbd"/><circle cx="1769" cy="377" r="5" fill="#fdfdfd"/><rect x="1765.5" y="433" width="7" height="6" fill="none" stroke="#c8c8c8" stroke-width="1.5"/><ellipse cx="1769" cy="449.5" rx="12.5" ry="11.5" fill="none" stroke="#c4c4c4" stroke-width="4.5" stroke-dasharray="3 1.5"/><circle cx="1769" cy="449.5" r="5" fill="none" stroke="#d0d0d0" stroke-width="1"/><rect x="1765.5" y="506" width="7" height="7" fill="#d6d6d6"/><ellipse cx="1769" cy="523.5" rx="14" ry="12.5" fill="#d6d6d6"/><rect x="1765" y="654" width="8" height="7" fill="#000"/><ellipse cx="1769" cy="670.5" rx="14.2" ry="12.5" fill="#000"/><circle cx="1769" cy="671" r="5" fill="#fdfdfd"/><rect x="1755" y="731.5" width="28.5" height="17" fill="#c49036"/><ellipse cx="1769" cy="744" rx="8" ry="6" fill="#2b2e38"/><circle cx="1769" cy="737.5" r="3.5" fill="#e0d070"/><circle cx="1769" cy="741" r="2.5" fill="#eec0a0"/><ellipse cx="1764" cy="746" rx="3" ry="2" fill="#d8d4c8"/><ellipse cx="1774" cy="746" rx="3" ry="2" fill="#d8d4c8"/><rect x="1765" y="800" width="8" height="7" fill="#616161"/><ellipse cx="1769" cy="816.5" rx="14.2" ry="13" fill="#616161"/></svg>
<div class="t" style="left:1754.4px;top:221.8px;font-size:18.5px;line-height:18.5px;color:#a3a3a3;letter-spacing:0.04px;">Pumpkin Frame</div>
<div class="t" style="left:1795.9px;top:282.6px;font-size:18.5px;line-height:18.5px;color:#a3a3a3;letter-spacing:0.08px;">Stem</div>
<div class="t" style="left:1795.9px;top:308.6px;font-size:18.5px;line-height:18.5px;color:#c6c6c6;letter-spacing:-0.09px;">Basic Cut</div>
<div class="t" style="left:1795.9px;top:355.3px;font-size:18.5px;line-height:18.5px;color:#a3a3a3;letter-spacing:-0.06px;">Top Layer</div>
<div class="t" style="left:1795.9px;top:381.3px;font-size:18.5px;line-height:18.5px;color:#c6c6c6;letter-spacing:-0.09px;">Basic Cut</div>
<div class="t" style="left:1795.9px;top:428.0px;font-size:18.5px;line-height:18.5px;color:#a3a3a3;letter-spacing:0.05px;">Middle Layer</div>
<div class="t" style="left:1795.9px;top:454.0px;font-size:18.5px;line-height:18.5px;color:#c6c6c6;letter-spacing:-0.09px;">Basic Cut</div>
<div class="t" style="left:1795.9px;top:500.7px;font-size:18.5px;line-height:18.5px;color:#a3a3a3;letter-spacing:0.00px;">Bottom Layer</div>
<div class="t" style="left:1795.9px;top:526.7px;font-size:18.5px;line-height:18.5px;color:#c6c6c6;letter-spacing:-0.09px;">Basic Cut</div>
<div class="t" style="left:1754.3px;top:588.3px;font-size:18.5px;line-height:18.5px;color:#3b3e41;letter-spacing:0.16px;">Optional Layers</div>
<div class="t" style="left:1795.6px;top:647.3px;font-size:18.5px;line-height:18.5px;color:#3b3e41;letter-spacing:-0.02px;">Photo Slice Layer</div>
<div class="t" style="left:1795.6px;top:673.3px;font-size:18.5px;line-height:18.5px;color:#6a6d70;letter-spacing:-0.04px;">Basic Cut</div>
<div class="t" style="left:1795.6px;top:719.8px;font-size:18.5px;line-height:18.5px;color:#2a2d30;font-weight:bold;letter-spacing:-0.37px;">Pumpkin Picture</div>
<div class="t" style="left:1795.6px;top:746.3px;font-size:18.5px;line-height:18.5px;color:#6a6d70;letter-spacing:0.10px;">Print Then Cut</div>
<div class="t" style="left:1795.6px;top:793.3px;font-size:18.5px;line-height:18.5px;color:#3b3e41;letter-spacing:0.19px;">Chipboard Layer</div>
<div class="t" style="left:1795.6px;top:819.8px;font-size:18.5px;line-height:18.5px;color:#6a6d70;letter-spacing:-0.04px;">Basic Cut</div>
<div class="a" style="left:1664px;top:1047px;width:384px;height:65px;background:#f2f2f2"></div>
<div class="a" style="left:1679px;top:1056px;width:68px;height:46px;background:#fff;border:2px solid #5a5a5a;border-radius:4px"></div>
<div class="t" style="left:1760.3px;top:1075.0px;font-size:13px;line-height:13px;color:#333638;letter-spacing:-0.01px;">Blank Canvas</div>
<svg class="a" style="left:0;top:0" width="2048" height="1239" viewBox="0 0 2048 1239"><g fill="none" stroke="#cfcfcf" stroke-width="1.6"><path d="M1700 1133 Q1690 1133 1690 1127 Q1690 1120 1697 1120 Q1704 1120 1705 1126"/><rect x="1697.5" y="1126.5" width="14" height="16" rx="1"/><path d="M1697.5 1137 L1706 1128"/></g><g fill="none" stroke="#cfcfcf" stroke-width="1.6"><rect x="1747" y="1120" width="14" height="14" rx="1"/><circle cx="1758" cy="1133" r="8"/></g><path d="M1777 1129.5 L1785 1129.5 L1781 1134 Z" fill="#cfcfcf"/><path d="M1836 1138 L1826.5 1138 Q1820.5 1138 1820.5 1131 Q1820.5 1124 1826.5 1124 L1840 1124 Q1845.5 1124 1845.5 1129.5 Q1845.5 1135 1840 1135 L1828 1135 Q1825 1135 1825 1131 Q1825 1127.5 1828 1127.5 L1838 1127.5" fill="none" stroke="#1f2124" stroke-width="2.2" stroke-linecap="round"/><g fill="none" stroke="#1f2124" stroke-width="2.1" stroke-linejoin="round" stroke-linecap="round"><path d="M1895 1118 L1895 1130 M1890.5 1126 L1895 1130.5 L1899.5 1126"/><path d="M1884 1128 L1895 1135.5 L1906 1128"/><path d="M1884 1135 L1895 1142.5 L1906 1135 L1900 1131"/></g><circle cx="1961.5" cy="1131" r="12.5" fill="none" stroke="#cfcfcf" stroke-width="1.6" stroke-dasharray="4 3"/></svg>
<div class="t" style="left:1686.0px;top:1153.1px;font-size:13.5px;line-height:13.5px;color:#c9c9c9;letter-spacing:-0.07px;">Slice</div>
<div class="t" style="left:1737.0px;top:1153.1px;font-size:13.5px;line-height:13.5px;color:#c9c9c9;letter-spacing:0.16px;">Combine</div>
<div class="t" style="left:1813.4px;top:1153.1px;font-size:13.5px;line-height:13.5px;color:#222426;letter-spacing:0.26px;">Attach</div>
<div class="t" style="left:1874.0px;top:1153.1px;font-size:13.5px;line-height:13.5px;color:#222426;letter-spacing:0.05px;">Flatten</div>
<div class="t" style="left:1936.9px;top:1153.1px;font-size:13.5px;line-height:13.5px;color:#c9c9c9;letter-spacing:0.16px;">Contour</div>
<div class="a" style="left:1665px;top:1175.5px;width:383px;height:64px;background:#0d2379"></div>
<svg class="a" style="left:0;top:0" width="2048" height="1239" viewBox="0 0 2048 1239"><path d="M1686 1193.5 L1727.5 1193.5 L1721 1221 L1697 1221 L1692 1228 L1690 1221 L1686 1221 Z" fill="#3fa56f"/><path d="M1712 1213.5 L1712 1205.5 Q1712 1201 1706.5 1201 Q1702 1201 1701 1204 M1712 1208.5 Q1706 1207.5 1702.5 1209.5 Q1700.5 1211 1701.5 1213 Q1703 1215 1707 1214 Q1710 1213 1712 1211" fill="none" stroke="#fff" stroke-width="2"/><path d="M1739 1194 L1747 1190 L1755 1194 L1747 1198 Z" fill="#1d1d1d"/><path d="M1742 1196 L1742 1200 Q1747 1203 1752 1200 L1752 1196" fill="#2a2a2a"/><line x1="1740.5" y1="1194.5" x2="1740.5" y2="1203" stroke="#e0a020" stroke-width="1.5"/><path d="M2025 1203.5 L2036.5 1215 M2036.5 1203.5 L2025 1215" stroke="#fff" stroke-width="2.2"/></svg>
<div class="t" style="left:1761.3px;top:1187.4px;font-size:19px;line-height:19px;color:#ffffff;letter-spacing:-0.10px;">Join a free, live workshop &amp;</div>
<div class="t" style="left:1738.0px;top:1212.9px;font-size:19px;line-height:19px;color:#ffffff;letter-spacing:0.12px;">learn from the pros.</div>
</body></html>
